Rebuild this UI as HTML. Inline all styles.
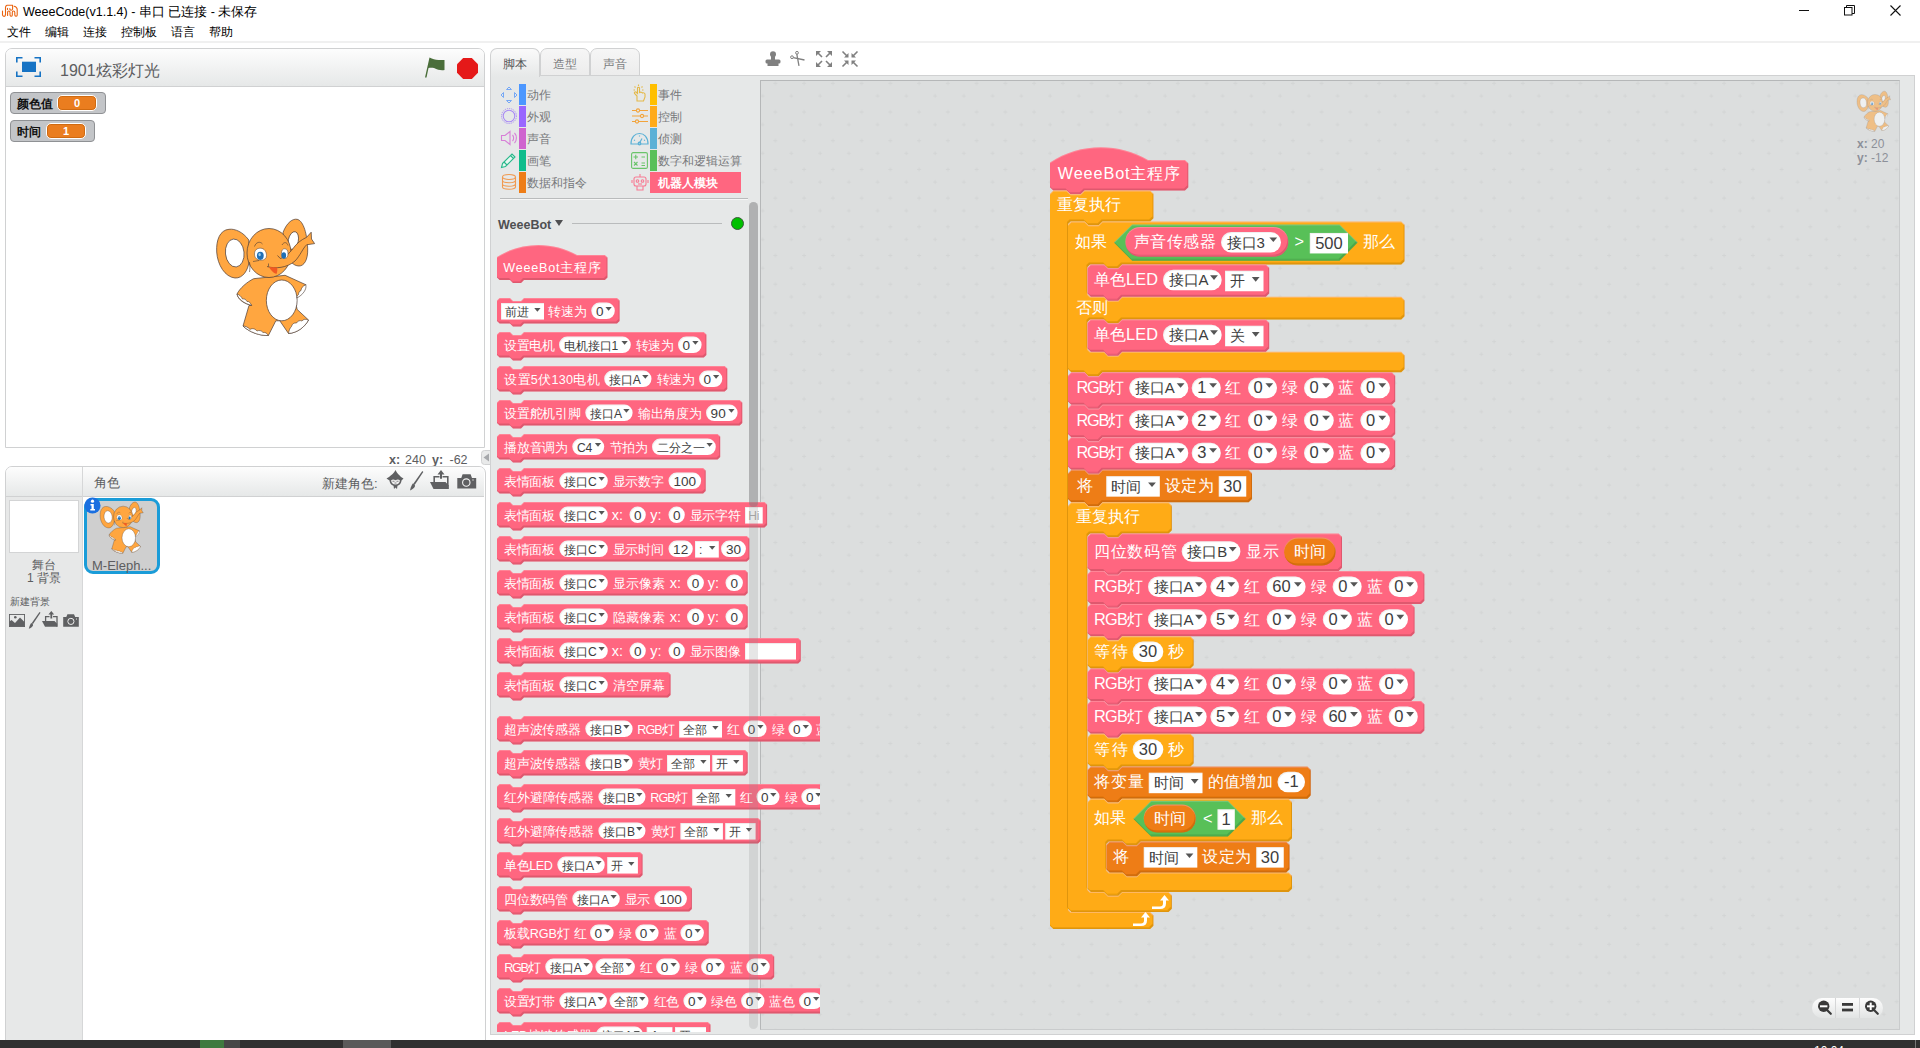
<!DOCTYPE html><html><head><meta charset="utf-8"><style>
*{margin:0;padding:0;box-sizing:border-box}
html,body{width:1920px;height:1048px;overflow:hidden;background:#fff;font-family:"Liberation Sans", sans-serif;}
.a{position:absolute}
.t{position:absolute;white-space:nowrap;line-height:1}
svg text{font-family:"Liberation Sans", sans-serif;}

</style></head><body>
<svg width="0" height="0" style="position:absolute"><defs>
<filter id="bev" x="-5%" y="-10%" width="110%" height="120%"><feOffset in="SourceAlpha" dx="-1" dy="-1.6" result="o"/><feComposite in="SourceAlpha" in2="o" operator="out" result="e"/><feFlood flood-color="#000" flood-opacity="0.26"/><feComposite in2="e" operator="in" result="s"/><feOffset in="SourceAlpha" dx="0" dy="1" result="o2"/><feComposite in="SourceAlpha" in2="o2" operator="out" result="e2"/><feFlood flood-color="#fff" flood-opacity="0.12"/><feComposite in2="e2" operator="in" result="h"/><feMerge><feMergeNode in="SourceGraphic"/><feMergeNode in="s"/><feMergeNode in="h"/></feMerge></filter>
<filter id="ins" x="-5%" y="-10%" width="110%" height="120%"><feOffset in="SourceAlpha" dx="0.8" dy="1" result="o"/><feComposite in="SourceAlpha" in2="o" operator="out" result="e"/><feFlood flood-color="#000" flood-opacity="0.13"/><feComposite in2="e" operator="in" result="s"/><feMerge><feMergeNode in="SourceGraphic"/><feMergeNode in="s"/></feMerge></filter>
<linearGradient id="hdr" x1="0" y1="0" x2="0" y2="1"><stop offset="0" stop-color="#fdfdfd"/><stop offset="1" stop-color="#e4e6e6"/></linearGradient>
</defs></svg>
<svg style="position:absolute;left:0px;top:0px;overflow:visible" width="20" height="19" viewBox="0 0 20 19"><path d="M2.5,11 V15 Q3.5,17 5,16 Q5.8,15 5.5,12 V7.2 Q5.5,6 7,5.3 H12.6 V9 Q12.4,10.4 11,10.3 Q9.6,10 9.8,8.5 M7.6,15.5 V12.3 Q7.6,11 8.7,11 Q10,11 10,12.5 V15 Q10.4,16.4 11.3,16.3 Q12.3,16 12.3,15 V12.5 Q12.3,11 13.5,11 Q14.8,11 14.8,12.5 V15 Q15.2,16.4 16.2,16.3 Q17.2,16 17.2,15 V9.5 Q17.2,7 14.2,6.2 M7.5,8.3 V9.5" fill="none" stroke="#ea6410" stroke-width="1.1" stroke-linecap="round" stroke-linejoin="round"/></svg>
<div class="t" style="left:23px;top:6px;font-size:12.5px;color:#000">WeeeCode(v1.1.4) - 串口 已连接 - 未保存</div>
<div class="a" style="left:1799px;top:10px;width:10px;height:1px;background:#111"></div>
<svg style="position:absolute;left:1844px;top:5px;overflow:visible" width="11" height="11" viewBox="0 0 11 11"><rect x="0.5" y="2.5" width="7.5" height="7.5" fill="none" stroke="#111" stroke-width="1"/><path d="M2.5,2.5 V0.5 H10.5 V8.5 H8" fill="none" stroke="#111" stroke-width="1"/></svg>
<svg style="position:absolute;left:1890px;top:5px;overflow:visible" width="11" height="11" viewBox="0 0 11 11"><path d="M0.5,0.5 L10.5,10.5 M10.5,0.5 L0.5,10.5" stroke="#111" stroke-width="1.1"/></svg>
<div class="t" style="left:7px;top:26px;font-size:12px;color:#000">文件</div>
<div class="t" style="left:45px;top:26px;font-size:12px;color:#000">编辑</div>
<div class="t" style="left:83px;top:26px;font-size:12px;color:#000">连接</div>
<div class="t" style="left:121px;top:26px;font-size:12px;color:#000">控制板</div>
<div class="t" style="left:171px;top:26px;font-size:12px;color:#000">语言</div>
<div class="t" style="left:209px;top:26px;font-size:12px;color:#000">帮助</div>
<div class="a" style="left:0;top:41px;width:1920px;height:2px;background:#f0f0f0"></div>
<div class="a" style="left:5px;top:48px;width:480px;height:400px;border:1px solid #d0d1d2;border-radius:7px 7px 0 0;background:#fff;overflow:hidden">
<div class="a" style="left:0;top:0;width:478px;height:38px;background:linear-gradient(#fdfdfd,#e6e8e8);border-bottom:1px solid #d0d1d2"></div></div>
<svg style="position:absolute;left:16px;top:57px;overflow:visible" width="25" height="20" viewBox="0 0 25 20"><path d="M0.8,5.5 V0.8 H6.5 M18.5,0.8 H24.2 V5.5 M0.8,14.5 V19.2 H6.5 M18.5,19.2 H24.2 V14.5" fill="none" stroke="#1673c4" stroke-width="1.6"/><rect x="6" y="4.7" width="14" height="10.3" fill="#1673c4"/></svg>
<div class="t" style="left:60px;top:62.5px;font-size:16px;color:#5c5d5f">1901炫彩灯光</div>
<svg style="position:absolute;left:424px;top:56px;overflow:visible" width="22" height="23" viewBox="0 0 22 23"><path d="M1,21.5 L5.5,1.5 C9,3 12,4.5 16,4 L20.5,4 L20.5,14 C17,14.5 14,14 10,12 C8,11.5 6,11.5 4.5,12 L2.5,21.5 Z" fill="#4a6e3a"/></svg>
<svg style="position:absolute;left:457px;top:58px;overflow:visible" width="21" height="21" viewBox="0 0 21 21"><path d="M6.2,0 H14.8 L21,6.2 V14.8 L14.8,21 H6.2 L0,14.8 V6.2 Z" fill="#e51919"/></svg>
<div class="a" style="left:10px;top:92px;width:96px;height:22px;background:#c3c5c8;border:1px solid #8f9194;border-radius:4px"></div>
<div class="t" style="left:17px;top:98px;font-size:12px;font-weight:bold;color:#111">颜色值</div>
<div class="a" style="left:57px;top:95px;width:40px;height:16px;background:#ea7d1f;border:1px solid #fff;border-radius:5px;box-shadow:inset 0 0 0 1px #d06a10"></div>
<div class="t" style="left:57px;top:98px;width:40px;text-align:center;font-size:11px;font-weight:bold;color:#fff">0</div>
<div class="a" style="left:10px;top:120px;width:85px;height:22px;background:#c3c5c8;border:1px solid #8f9194;border-radius:4px"></div>
<div class="t" style="left:17px;top:126px;font-size:12px;font-weight:bold;color:#111">时间</div>
<div class="a" style="left:46px;top:123px;width:40px;height:16px;background:#ea7d1f;border:1px solid #fff;border-radius:5px;box-shadow:inset 0 0 0 1px #d06a10"></div>
<div class="t" style="left:46px;top:126px;width:40px;text-align:center;font-size:11px;font-weight:bold;color:#fff">1</div>
<svg class="a" style="left:205px;top:210px" width="120" height="135" viewBox="0 0 120 135">
<g stroke="#4a3a34" stroke-width="0.7" stroke-linejoin="round">
<path d="M78,22.5 C82,12 88,8.5 92,9.3 C97,10 102,20 102.7,39 C103,50 99,56 94,56 C88,56 84,50 82,45 Z" fill="#FFA640"/>
<ellipse cx="88.3" cy="30.5" rx="5" ry="9" transform="rotate(12 88.3 30.5)" fill="#fff"/>
<path d="M48.7,68.7 C42,72 35,78 32,84 C33,90 40,94 46.7,95.4 L44,95.4 L38,116 C44,122 55,126 63.4,125.5 L70.8,110.8 L74.8,110.8 L83.5,123.5 C92,123 100,117 103.5,110 L92.1,99.4 C91,95 91,91 90.8,88 C95,84 99,79 100.8,74.7 L80.1,65.3 Z" fill="#FFA640"/>
<ellipse cx="76.75" cy="90.4" rx="15.4" ry="20.4" fill="#fff"/>
<path d="M43.8,30 C38,22 30,18.5 24,19.3 C15,20 11,30 11.7,42 C12.5,55 20,67 30,68 C38,68.5 43,60 44,52 Z" fill="#FFA640"/>
<ellipse cx="29.75" cy="43" rx="9.3" ry="14" transform="rotate(-6 29.75 43)" fill="#fff"/>
<ellipse cx="64" cy="43" rx="22" ry="24.5" fill="#FFA640"/>
<path d="M62,56.5 C70,59 82,58 90,51 C95,46 98,38 101.6,34.8 L109.6,33.6 L106.5,29 L106.2,22.2 L101.6,27.3 C96,30 92,33 88,38.5 C84,44 80,47 75.3,48.5 L72,45 L64,50 Z" fill="#FFA640" stroke="none"/><path d="M62,56.5 C70,59 82,58 90,51 C95,46 98,38 101.6,34.8 L109.6,33.6 L106.5,29 L106.2,22.2 L101.6,27.3 C96,30 92,33 88,38.5 C84,44 80,47 75.3,48.5 L72.5,45.5" fill="none"/>
<path d="M63.8,57 C66,60 68,63 71.5,64 C72.5,62 72.5,59 72,57.5 Z" fill="#f15a22" stroke="none"/>
</g>
<path d="M49.5,44 C49.5,40 52,38.2 55.5,38.2 C59.5,38.2 61.5,42 61.5,45.5 C61.5,48.5 59.5,50.2 56,50.2 C52,50.2 49.5,48 49.5,44 Z" fill="#fff" stroke="#4a3a34" stroke-width="0.5"/>
<ellipse cx="55.3" cy="45.8" rx="3.4" ry="4.1" fill="#1f6fb5"/>
<ellipse cx="54.6" cy="44.6" rx="1.2" ry="1.6" fill="#9fd0f0"/>
<ellipse cx="79.7" cy="43.6" rx="3.3" ry="4.8" fill="#fff" stroke="#4a3a34" stroke-width="0.5"/>
<ellipse cx="78.8" cy="45.5" rx="2.3" ry="3.2" fill="#1f6fb5"/>
<path d="M49.5,36.5 C51,32 55,31 57.5,34 M77,35 C79,31.5 82,32 83,35.5 M54,50.5 L48,51.5 M44.5,52 C45,56 45,59 44.5,62 M63.5,53.5 V56.5" fill="none" stroke="#4a3a34" stroke-width="0.6"/>
<g fill="#fff" stroke="#4a3a34" stroke-width="0.6">
<path d="M32,84 C33,89 39,93.5 46.7,95.4 C45,92.5 44,91 42,91.5 C41,89.5 39.5,88.5 37.5,89 C36.5,86.5 34,84.5 32,84 Z"/>
<path d="M100.8,74.7 C102,79 98,85 91.8,88 C92,86 92.5,85 93.5,84.5 C93.5,82.5 94.5,81 96,80.5 C96,78.5 97.5,76 100.8,74.7 Z"/>
<path d="M38,116 C44,122 55,126 63.4,125.5 C62,123 60,122 58,122.5 C56.5,120.5 54,120 52,121 C50,118.5 47,118 45,119.5 C43,117 40,116 38,116 Z"/>
<path d="M83.5,123.5 C92,123 100,117 103.5,110 C100,108.5 98,109.5 97,111 C95,110 92.5,111 91.5,113 C89,112.5 87,114 86.5,116.5 C85,118 84,120 83.5,123.5 Z"/>
</g>
</svg>
<div class="t" style="left:389px;top:454px;font-size:12.5px;color:#5c5d5f;font-weight:bold">x:</div>
<div class="t" style="left:405px;top:454px;font-size:12.5px;color:#5c5d5f;">240</div>
<div class="t" style="left:432px;top:454px;font-size:12.5px;color:#5c5d5f;font-weight:bold">y:</div>
<div class="t" style="left:449.5px;top:454px;font-size:12.5px;color:#5c5d5f;">-62</div>
<svg style="position:absolute;left:481px;top:450px;overflow:visible" width="10" height="15" viewBox="0 0 10 15"><rect x="0.5" y="0.5" width="12" height="14" rx="3" fill="#e9eaea" stroke="#d0d1d2"/><path d="M2.5,7.5 L8,3.5 V11.5 Z" fill="#a6a8ab"/></svg>
<div class="a" style="left:5px;top:466px;width:481px;height:600px;border:1px solid #d0d1d2;border-radius:7px 7px 0 0;background:#fff;overflow:hidden">
<div class="a" style="left:0;top:0;width:478px;height:30px;background:linear-gradient(#fdfdfd,#e6e8e8);border-bottom:1px solid #d0d1d2"></div>
<div class="a" style="left:0;top:30px;width:77px;height:600px;background:#e7e8e8"></div>
<div class="a" style="left:76px;top:0;width:1px;height:600px;background:#d6d7d8"></div>
</div>
<div class="t" style="left:94px;top:476px;font-size:13px;color:#5c5d5f">角色</div>
<div class="t" style="left:322px;top:477px;font-size:13px;color:#5c5d5f">新建角色:</div>
<svg style="position:absolute;left:386px;top:470px;overflow:visible" width="18" height="20" viewBox="0 0 18 20"><path d="M9.5,0 C10.5,3 13.5,5 15,7 L17.5,8.5 L15.5,10.5 C15,14.5 12.5,16 9.5,16 C6.5,16 4,14.5 3.5,10.5 L0.5,8.5 L3,7 C5,5 8.5,3 9.5,0 Z" fill="#5f6062"/><path d="M5,10.5 C6.5,9 8,9.5 9.5,10.2 C11,9.5 12.5,9 14,10.5 C13.5,13 12,14.5 9.5,14.5 C7,14.5 5.5,13 5,10.5 Z" fill="#eee"/><path d="M6.5,11.3 H8.5 M10.5,11.3 H12.5 M8.5,13 H10.5" stroke="#5f6062" stroke-width="0.7"/><path d="M7.5,15.5 H11.5 L11,19 L9.5,17.5 L8,19 Z" fill="#5f6062"/></svg>
<svg style="position:absolute;left:409px;top:470px;overflow:visible" width="15" height="21" viewBox="0 0 15 21"><path d="M13.3,1 L14.3,1.9 L5.8,14.8 L4.2,13.9 Z" fill="#5f6062"/><path d="M3.8,13.6 C5.2,14 6.3,15 5.9,16.5 C5.2,18.3 3,19.6 1,20.5 C1.4,18.6 2,16.6 3,14.8 Z" fill="#5f6062"/></svg>
<svg style="position:absolute;left:430px;top:470px;overflow:visible" width="20" height="20" viewBox="0 0 20 20"><path d="M11,0 L14.5,4.5 H12 V8.8 H10 V4.5 H7.5 Z" fill="#5f6062"/><path d="M4.2,12.5 V6.8 H9.5 M12.5,6.8 H17.8 V19" fill="none" stroke="#5f6062" stroke-width="1.6"/><path d="M0,12 H15.5 L18.6,15.2 V19 H3.5 Z" fill="#5f6062"/></svg>
<svg style="position:absolute;left:457px;top:474px;overflow:visible" width="20" height="15" viewBox="0 0 20 15"><path d="M0.3,4 H4.3 L5.6,0.3 H13.6 L15,4 H19.2 V14.4 H0.3 Z" fill="#5f6062"/><circle cx="9.3" cy="8.6" r="3.7" fill="none" stroke="#f4f4f4" stroke-width="1.1"/><rect x="15.6" y="5.2" width="0.8" height="1.6" fill="#f4f4f4"/></svg>
<div class="a" style="left:9px;top:500px;width:70px;height:53px;background:#fff;border:1px solid #d3d4d5"></div>
<div class="t" style="left:32px;top:559px;font-size:12px;color:#5c5d5f">舞台</div>
<div class="t" style="left:27px;top:572px;font-size:12px;color:#5c5d5f">1 背景</div>
<div class="t" style="left:10px;top:597px;font-size:10px;color:#5c5d5f">新建背景</div>
<svg style="position:absolute;left:9px;top:614px;overflow:visible" width="16" height="13" viewBox="0 0 16 13"><rect x="0.45" y="0.45" width="15.1" height="12.1" fill="none" stroke="#5f6062" stroke-width="0.9"/><path d="M0.5,12.5 V7.5 L2.5,6 L6,9 L11,3.5 L15.5,8 V12.5 Z" fill="#5f6062"/><circle cx="6.3" cy="3.3" r="1.3" fill="#5f6062"/></svg>
<svg style="position:absolute;left:28px;top:611px;overflow:visible" width="13" height="18" viewBox="0 0 13 18"><path d="M11.5,1 L12.5,1.8 L5,13 L3.6,12.2 Z" fill="#5f6062"/><path d="M3.2,12 C4.4,12.4 5.3,13.3 5,14.5 C4.4,16 2.5,17 0.8,17.8 C1.2,16.2 1.7,14.5 2.5,13 Z" fill="#5f6062"/></svg>
<svg style="position:absolute;left:42px;top:611px;overflow:visible" width="16" height="16" viewBox="0 0 16 16"><path d="M9.3,0 L12.2,3.5 H10.2 V7.5 H8.4 V3.5 H6.4 Z" fill="#5f6062"/><path d="M3.6,10.5 V5.6 H7.5 M11,5.6 H15 V15.8" fill="none" stroke="#5f6062" stroke-width="1.3"/><path d="M0,10 H12.5 L15.2,12.8 V15.8 H3 Z" fill="#5f6062"/></svg>
<svg style="position:absolute;left:63px;top:614px;overflow:visible" width="16" height="13" viewBox="0 0 16 13"><path d="M0.2,3 H3.3 L4.4,0.3 H11 L12.2,3 H15.8 V12.8 H0.2 Z" fill="#5f6062"/><circle cx="7.9" cy="7.4" r="3.1" fill="none" stroke="#eee" stroke-width="1"/><rect x="13" y="4.4" width="0.7" height="1.3" fill="#eee"/></svg>
<div class="a" style="left:84px;top:498px;width:76px;height:76px;border:3px solid #1a9cd8;border-radius:9px;background:#cfcfcf"></div>
<svg class="a" style="left:95.3px;top:497.9px" width="52.8" height="59.4" viewBox="0 0 120 135">
<g stroke="#4a3a34" stroke-width="0.7" stroke-linejoin="round">
<path d="M78,22.5 C82,12 88,8.5 92,9.3 C97,10 102,20 102.7,39 C103,50 99,56 94,56 C88,56 84,50 82,45 Z" fill="#FFA640"/>
<ellipse cx="88.3" cy="30.5" rx="5" ry="9" transform="rotate(12 88.3 30.5)" fill="#fff"/>
<path d="M48.7,68.7 C42,72 35,78 32,84 C33,90 40,94 46.7,95.4 L44,95.4 L38,116 C44,122 55,126 63.4,125.5 L70.8,110.8 L74.8,110.8 L83.5,123.5 C92,123 100,117 103.5,110 L92.1,99.4 C91,95 91,91 90.8,88 C95,84 99,79 100.8,74.7 L80.1,65.3 Z" fill="#FFA640"/>
<ellipse cx="76.75" cy="90.4" rx="15.4" ry="20.4" fill="#fff"/>
<path d="M43.8,30 C38,22 30,18.5 24,19.3 C15,20 11,30 11.7,42 C12.5,55 20,67 30,68 C38,68.5 43,60 44,52 Z" fill="#FFA640"/>
<ellipse cx="29.75" cy="43" rx="9.3" ry="14" transform="rotate(-6 29.75 43)" fill="#fff"/>
<ellipse cx="64" cy="43" rx="22" ry="24.5" fill="#FFA640"/>
<path d="M62,56.5 C70,59 82,58 90,51 C95,46 98,38 101.6,34.8 L109.6,33.6 L106.5,29 L106.2,22.2 L101.6,27.3 C96,30 92,33 88,38.5 C84,44 80,47 75.3,48.5 L72,45 L64,50 Z" fill="#FFA640" stroke="none"/><path d="M62,56.5 C70,59 82,58 90,51 C95,46 98,38 101.6,34.8 L109.6,33.6 L106.5,29 L106.2,22.2 L101.6,27.3 C96,30 92,33 88,38.5 C84,44 80,47 75.3,48.5 L72.5,45.5" fill="none"/>
<path d="M63.8,57 C66,60 68,63 71.5,64 C72.5,62 72.5,59 72,57.5 Z" fill="#f15a22" stroke="none"/>
</g>
<path d="M49.5,44 C49.5,40 52,38.2 55.5,38.2 C59.5,38.2 61.5,42 61.5,45.5 C61.5,48.5 59.5,50.2 56,50.2 C52,50.2 49.5,48 49.5,44 Z" fill="#fff" stroke="#4a3a34" stroke-width="0.5"/>
<ellipse cx="55.3" cy="45.8" rx="3.4" ry="4.1" fill="#1f6fb5"/>
<ellipse cx="54.6" cy="44.6" rx="1.2" ry="1.6" fill="#9fd0f0"/>
<ellipse cx="79.7" cy="43.6" rx="3.3" ry="4.8" fill="#fff" stroke="#4a3a34" stroke-width="0.5"/>
<ellipse cx="78.8" cy="45.5" rx="2.3" ry="3.2" fill="#1f6fb5"/>
<path d="M49.5,36.5 C51,32 55,31 57.5,34 M77,35 C79,31.5 82,32 83,35.5 M54,50.5 L48,51.5 M44.5,52 C45,56 45,59 44.5,62 M63.5,53.5 V56.5" fill="none" stroke="#4a3a34" stroke-width="0.6"/>
<g fill="#fff" stroke="#4a3a34" stroke-width="0.6">
<path d="M32,84 C33,89 39,93.5 46.7,95.4 C45,92.5 44,91 42,91.5 C41,89.5 39.5,88.5 37.5,89 C36.5,86.5 34,84.5 32,84 Z"/>
<path d="M100.8,74.7 C102,79 98,85 91.8,88 C92,86 92.5,85 93.5,84.5 C93.5,82.5 94.5,81 96,80.5 C96,78.5 97.5,76 100.8,74.7 Z"/>
<path d="M38,116 C44,122 55,126 63.4,125.5 C62,123 60,122 58,122.5 C56.5,120.5 54,120 52,121 C50,118.5 47,118 45,119.5 C43,117 40,116 38,116 Z"/>
<path d="M83.5,123.5 C92,123 100,117 103.5,110 C100,108.5 98,109.5 97,111 C95,110 92.5,111 91.5,113 C89,112.5 87,114 86.5,116.5 C85,118 84,120 83.5,123.5 Z"/>
</g>
</svg>
<div class="t" style="left:92px;top:559px;font-size:13px;color:#5c5d5f">M-Eleph...</div>
<svg style="position:absolute;left:84px;top:497px;overflow:visible" width="17" height="17" viewBox="0 0 17 17"><circle cx="8.5" cy="8.5" r="8" fill="#1a6fe0"/><circle cx="8.5" cy="4.2" r="1.6" fill="#fff"/><path d="M6.5,7 H9.8 V12 H11 V13.5 H6.3 V12 H7.5 V8.4 H6.5 Z" fill="#fff"/></svg>
<div class="a" style="left:490px;top:75px;width:1425px;height:960px;background:#e6e8e8;border:1px solid #d0d1d2"></div>
<div class="a" style="left:540px;top:48px;width:50px;height:28px;border:1px solid #d0d1d2;border-radius:7px 7px 0 0;background:linear-gradient(#f6f6f6,#ececec)"></div>
<div class="t" style="left:540px;top:57.5px;width:50px;text-align:center;font-size:12px;color:#7a7b7d">造型</div>
<div class="a" style="left:590px;top:48px;width:50px;height:28px;border:1px solid #d0d1d2;border-radius:7px 7px 0 0;background:linear-gradient(#f6f6f6,#ececec)"></div>
<div class="t" style="left:590px;top:57.5px;width:50px;text-align:center;font-size:12px;color:#7a7b7d">声音</div>
<div class="a" style="left:490px;top:48px;width:50px;height:29px;border:1px solid #d0d1d2;border-bottom:none;border-radius:7px 7px 0 0;background:linear-gradient(#fafafa,#e6e8e8)"></div>
<div class="t" style="left:490px;top:57.5px;width:50px;text-align:center;font-size:12px;color:#4f5052">脚本</div>
<svg style="position:absolute;left:765px;top:51px;overflow:visible" width="16" height="16" viewBox="0 0 16 16"><circle cx="8" cy="3.2" r="3" fill="#808080"/><rect x="6" y="4" width="4" height="6" fill="#808080"/><rect x="0.5" y="8.5" width="15" height="4" rx="1.5" fill="#808080"/><rect x="2.5" y="12" width="11" height="3" fill="#808080"/></svg>
<svg style="position:absolute;left:790px;top:51px;overflow:visible" width="16" height="16" viewBox="0 0 16 16"><circle cx="7" cy="1.8" r="1.4" fill="none" stroke="#808080" stroke-width="1"/><circle cx="2" cy="6.2" r="1.4" fill="none" stroke="#808080" stroke-width="1"/><path d="M6.8,3.2 L9,14.8 M3.3,6.6 L14.5,9" stroke="#808080" stroke-width="1.3"/></svg>
<svg style="position:absolute;left:816px;top:51px;overflow:visible" width="16" height="16" viewBox="0 0 16 16"><path d="M1,1 L6,6 M15,1 L10,6 M1,15 L6,10 M15,15 L10,10" stroke="#808080" stroke-width="1.6"/><path d="M0,0 H5 L0,5 Z M16,0 H11 L16,5 Z M0,16 H5 L0,11 Z M16,16 H11 L16,11 Z" fill="#808080"/></svg>
<svg style="position:absolute;left:842px;top:51px;overflow:visible" width="16" height="16" viewBox="0 0 16 16"><path d="M0.5,0.5 L5,5 M15.5,0.5 L11,5 M0.5,15.5 L5,11 M15.5,15.5 L11,11" stroke="#808080" stroke-width="1.6"/><path d="M6.5,6.5 H2 L6.5,2 Z M9.5,6.5 H14 L9.5,2 Z M6.5,9.5 H2 L6.5,14 Z M9.5,9.5 H14 L9.5,14 Z" fill="#808080"/></svg>
<div class="a" style="left:519px;top:84px;width:7px;height:21px;background:#4C97FF"></div>
<div class="t" style="left:527px;top:89px;font-size:12px;color:#77787b">动作</div>
<div class="a" style="left:519px;top:106px;width:7px;height:21px;background:#9966FF"></div>
<div class="t" style="left:527px;top:111px;font-size:12px;color:#77787b">外观</div>
<div class="a" style="left:519px;top:128px;width:7px;height:21px;background:#CF63CF"></div>
<div class="t" style="left:527px;top:133px;font-size:12px;color:#77787b">声音</div>
<div class="a" style="left:519px;top:150px;width:7px;height:21px;background:#0FBD8C"></div>
<div class="t" style="left:527px;top:155px;font-size:12px;color:#77787b">画笔</div>
<div class="a" style="left:519px;top:172px;width:7px;height:21px;background:#EE7D16"></div>
<div class="t" style="left:527px;top:177px;font-size:12px;color:#77787b">数据和指令</div>
<div class="a" style="left:650px;top:84px;width:7px;height:21px;background:#FFBF00"></div>
<div class="t" style="left:658px;top:89px;font-size:12px;color:#77787b">事件</div>
<div class="a" style="left:650px;top:106px;width:7px;height:21px;background:#FFAB19"></div>
<div class="t" style="left:658px;top:111px;font-size:12px;color:#77787b">控制</div>
<div class="a" style="left:650px;top:128px;width:7px;height:21px;background:#5CB1D6"></div>
<div class="t" style="left:658px;top:133px;font-size:12px;color:#77787b">侦测</div>
<div class="a" style="left:650px;top:150px;width:7px;height:21px;background:#59C059"></div>
<div class="t" style="left:658px;top:155px;font-size:12px;color:#77787b">数字和逻辑运算</div>
<div class="a" style="left:650px;top:172px;width:91px;height:21px;background:#FF6680"></div>
<div class="t" style="left:658px;top:177px;font-size:12px;font-weight:bold;color:#fff">机器人模块</div>
<svg style="position:absolute;left:500px;top:86px;overflow:visible" width="18" height="18" viewBox="0 0 18 18"><g fill="none" stroke="#76a8f5" stroke-width="1"><path d="M6.5,3.5 L9,1 L11.5,3.5 Z M6.5,14.5 L9,17 L11.5,14.5 Z M3.5,6.5 L1,9 L3.5,11.5 Z M14.5,6.5 L17,9 L14.5,11.5 Z"/></g></svg>
<svg style="position:absolute;left:500px;top:107px;overflow:visible" width="18" height="18" viewBox="0 0 18 18"><circle cx="9" cy="9" r="7.5" fill="none" stroke="#a98bf5" stroke-width="1" stroke-dasharray="1.2 1"/><circle cx="9" cy="9" r="5.8" fill="none" stroke="#a98bf5" stroke-width="1.1"/></svg>
<svg style="position:absolute;left:500px;top:129px;overflow:visible" width="18" height="18" viewBox="0 0 18 18"><path d="M1.5,6.5 H5 L10,2.5 V15.5 L5,11.5 H1.5 Z" fill="none" stroke="#d77fd7" stroke-width="1.1"/><path d="M12.5,6 C14,7.5 14,10.5 12.5,12 M14.5,4 C17,6.5 17,11.5 14.5,14" fill="none" stroke="#d77fd7" stroke-width="1.1"/></svg>
<svg style="position:absolute;left:500px;top:151px;overflow:visible" width="18" height="18" viewBox="0 0 18 18"><path d="M2.5,12.5 L12,3 L15,6 L5.5,15.5 L1.5,16.5 Z M10.5,4.5 L13.5,7.5 M4,11 L7,14" fill="#e8f7f1" stroke="#27b88a" stroke-width="1.1"/></svg>
<svg style="position:absolute;left:500px;top:173px;overflow:visible" width="18" height="18" viewBox="0 0 18 18"><g fill="none" stroke="#f09a50" stroke-width="1.1"><ellipse cx="9" cy="4" rx="6.5" ry="2.5"/><path d="M2.5,4 V14 C2.5,17 15.5,17 15.5,14 V4 M2.5,7.5 C2.5,10.5 15.5,10.5 15.5,7.5 M2.5,11 C2.5,14 15.5,14 15.5,11"/></g></svg>
<svg style="position:absolute;left:631px;top:84px;overflow:visible" width="18" height="18" viewBox="0 0 18 18"><g fill="none" stroke="#e4b94a" stroke-width="1.1"><path d="M6,17 V12 L3.5,9.5 C3,8.5 4,7.5 5,8 L6.5,9.5 V4 C6.5,3 8.5,3 8.5,4 V8.5 C9.5,8 11,8 11.5,9 C12.5,8.5 13.5,9 14,10 V13 L12.5,17 Z"/><path d="M7.5,0.5 V2 M3.5,2.5 L4.5,3.5 M11.5,2.5 L10.5,3.5 M2.5,6 H4 M11,6 H12.5"/></g></svg>
<svg style="position:absolute;left:631px;top:107px;overflow:visible" width="18" height="18" viewBox="0 0 18 18"><g fill="none" stroke="#f2a33a" stroke-width="1.1"><path d="M1,3.5 H17 M1,9 H17 M1,14.5 H17"/><circle cx="7" cy="3.5" r="1.6" fill="#e6e8e8"/><circle cx="11" cy="9" r="1.6" fill="#e6e8e8"/><circle cx="6" cy="14.5" r="1.6" fill="#e6e8e8"/></g></svg>
<svg style="position:absolute;left:630px;top:130px;overflow:visible" width="18" height="18" viewBox="0 0 18 18"><g fill="none" stroke="#5cb1d6" stroke-width="1.2"><path d="M1,14 C1,7 5,3.5 9.5,3.5 C14,3.5 18,7 18,14 Z"/><path d="M9.5,13 L12,8.5 M4,10 L5,10.5 M15,10 L14,10.5 M9.5,5.5 V6.5"/><circle cx="9.5" cy="13.5" r="1.3"/></g></svg>
<svg style="position:absolute;left:631px;top:152px;overflow:visible" width="18" height="18" viewBox="0 0 18 18"><rect x="0.6" y="0.6" width="15.8" height="15.8" rx="1.5" fill="none" stroke="#6ac46a" stroke-width="1.1"/><path d="M2.5,5 H7 M4.75,2.75 V7.25 M10.5,5 H14 M3,10 L6.5,13.5 M6.5,10 L3,13.5 M10.5,11 H14 M10.5,13.5 H14" stroke="#6ac46a" stroke-width="1.1"/></svg>
<svg style="position:absolute;left:631px;top:173px;overflow:visible" width="18" height="18" viewBox="0 0 18 18"><g fill="none" stroke="#f77b93" stroke-width="1.1"><rect x="3" y="4" width="12" height="9" rx="2"/><path d="M9,1 V4 M1,7 V10 M17,7 V10 M6,13 V17 H12 V13"/><circle cx="6.5" cy="8" r="1.3"/><circle cx="11.5" cy="8" r="1.3"/><path d="M7,11 H11"/></g></svg>
<div class="a" style="left:500px;top:198px;width:248px;height:1px;background:#b9bbbc"></div><div class="a" style="left:500px;top:199px;width:248px;height:1px;background:#f6f6f6"></div>
<div class="t" style="left:498px;top:219px;font-size:12.5px;font-weight:bold;color:#4f5052">WeeeBot</div>
<svg style="position:absolute;left:555px;top:220px;overflow:visible" width="8" height="6" viewBox="0 0 8 6"><path d="M0,0 H8 L4,6 Z" fill="#4f5052"/></svg>
<div class="a" style="left:572px;top:223px;width:150px;height:1px;background:#b9bbbc"></div>
<div class="a" style="left:730.5px;top:216.5px;width:13px;height:13px;border-radius:50%;background:#00c000;border:1px solid #3c5a3c"></div>
<svg class="a" style="left:760px;top:80px" width="1140" height="950"><defs><pattern id="gp" patternUnits="userSpaceOnUse" x="8.4" y="-4.1" width="28.75" height="28.7"><path d="M5,7.5 H9 M7,5.5 V9.5 M20.95,20 H24.95 M22.95,18 V22" stroke="#d3d5d5" stroke-width="1"/></pattern></defs><rect width="1140" height="950" fill="#dcdede"/><rect width="1140" height="950" fill="url(#gp)"/></svg>
<div class="a" style="left:760px;top:80px;width:1140px;height:950px;border-top:1px solid #b5b7b8;border-left:1px solid #b5b7b8;border-bottom:1px solid #c9cbcc;border-right:1px solid #c9cbcc"></div>
<svg class="a" style="left:1852.9px;top:87.9px;opacity:0.55" width="41.4" height="46.6" viewBox="0 0 120 135">
<g stroke="#4a3a34" stroke-width="0.7" stroke-linejoin="round">
<path d="M78,22.5 C82,12 88,8.5 92,9.3 C97,10 102,20 102.7,39 C103,50 99,56 94,56 C88,56 84,50 82,45 Z" fill="#FFA640"/>
<ellipse cx="88.3" cy="30.5" rx="5" ry="9" transform="rotate(12 88.3 30.5)" fill="#fff"/>
<path d="M48.7,68.7 C42,72 35,78 32,84 C33,90 40,94 46.7,95.4 L44,95.4 L38,116 C44,122 55,126 63.4,125.5 L70.8,110.8 L74.8,110.8 L83.5,123.5 C92,123 100,117 103.5,110 L92.1,99.4 C91,95 91,91 90.8,88 C95,84 99,79 100.8,74.7 L80.1,65.3 Z" fill="#FFA640"/>
<ellipse cx="76.75" cy="90.4" rx="15.4" ry="20.4" fill="#fff"/>
<path d="M43.8,30 C38,22 30,18.5 24,19.3 C15,20 11,30 11.7,42 C12.5,55 20,67 30,68 C38,68.5 43,60 44,52 Z" fill="#FFA640"/>
<ellipse cx="29.75" cy="43" rx="9.3" ry="14" transform="rotate(-6 29.75 43)" fill="#fff"/>
<ellipse cx="64" cy="43" rx="22" ry="24.5" fill="#FFA640"/>
<path d="M62,56.5 C70,59 82,58 90,51 C95,46 98,38 101.6,34.8 L109.6,33.6 L106.5,29 L106.2,22.2 L101.6,27.3 C96,30 92,33 88,38.5 C84,44 80,47 75.3,48.5 L72,45 L64,50 Z" fill="#FFA640" stroke="none"/><path d="M62,56.5 C70,59 82,58 90,51 C95,46 98,38 101.6,34.8 L109.6,33.6 L106.5,29 L106.2,22.2 L101.6,27.3 C96,30 92,33 88,38.5 C84,44 80,47 75.3,48.5 L72.5,45.5" fill="none"/>
<path d="M63.8,57 C66,60 68,63 71.5,64 C72.5,62 72.5,59 72,57.5 Z" fill="#f15a22" stroke="none"/>
</g>
<path d="M49.5,44 C49.5,40 52,38.2 55.5,38.2 C59.5,38.2 61.5,42 61.5,45.5 C61.5,48.5 59.5,50.2 56,50.2 C52,50.2 49.5,48 49.5,44 Z" fill="#fff" stroke="#4a3a34" stroke-width="0.5"/>
<ellipse cx="55.3" cy="45.8" rx="3.4" ry="4.1" fill="#1f6fb5"/>
<ellipse cx="54.6" cy="44.6" rx="1.2" ry="1.6" fill="#9fd0f0"/>
<ellipse cx="79.7" cy="43.6" rx="3.3" ry="4.8" fill="#fff" stroke="#4a3a34" stroke-width="0.5"/>
<ellipse cx="78.8" cy="45.5" rx="2.3" ry="3.2" fill="#1f6fb5"/>
<path d="M49.5,36.5 C51,32 55,31 57.5,34 M77,35 C79,31.5 82,32 83,35.5 M54,50.5 L48,51.5 M44.5,52 C45,56 45,59 44.5,62 M63.5,53.5 V56.5" fill="none" stroke="#4a3a34" stroke-width="0.6"/>
<g fill="#fff" stroke="#4a3a34" stroke-width="0.6">
<path d="M32,84 C33,89 39,93.5 46.7,95.4 C45,92.5 44,91 42,91.5 C41,89.5 39.5,88.5 37.5,89 C36.5,86.5 34,84.5 32,84 Z"/>
<path d="M100.8,74.7 C102,79 98,85 91.8,88 C92,86 92.5,85 93.5,84.5 C93.5,82.5 94.5,81 96,80.5 C96,78.5 97.5,76 100.8,74.7 Z"/>
<path d="M38,116 C44,122 55,126 63.4,125.5 C62,123 60,122 58,122.5 C56.5,120.5 54,120 52,121 C50,118.5 47,118 45,119.5 C43,117 40,116 38,116 Z"/>
<path d="M83.5,123.5 C92,123 100,117 103.5,110 C100,108.5 98,109.5 97,111 C95,110 92.5,111 91.5,113 C89,112.5 87,114 86.5,116.5 C85,118 84,120 83.5,123.5 Z"/>
</g>
</svg>
<div class="t" style="left:1857px;top:138px;font-size:12px;color:#8c9099;line-height:13.5px"><b>x:</b>&nbsp;20<br><b>y:</b>&nbsp;-12</div>
<div class="a" style="left:1812px;top:998px;width:71px;height:20px;border-radius:10px;background:linear-gradient(#fdfdfd,#e2e4e4)"></div>
<div class="a" style="left:1835px;top:998px;width:1px;height:20px;background:#d5d6d7"></div>
<div class="a" style="left:1859px;top:998px;width:1px;height:20px;background:#d5d6d7"></div>
<svg style="position:absolute;left:1817px;top:1000px;overflow:visible" width="16" height="16" viewBox="0 0 16 16"><circle cx="6.7" cy="6.3" r="5.7" fill="#3a3a3a"/><rect x="3" y="5.3" width="7.4" height="2" fill="#fff"/><path d="M10,10 L13.8,13.8" stroke="#3a3a3a" stroke-width="2.2" stroke-linecap="round"/></svg>
<svg style="position:absolute;left:1842px;top:1003px;overflow:visible" width="11" height="9" viewBox="0 0 11 9"><rect x="0" y="0" width="11" height="2.8" fill="#3a3a3a"/><rect x="0" y="5.6" width="11" height="2.8" fill="#3a3a3a"/></svg>
<svg style="position:absolute;left:1864px;top:1000px;overflow:visible" width="16" height="16" viewBox="0 0 16 16"><circle cx="6.7" cy="6.3" r="5.7" fill="#3a3a3a"/><rect x="3" y="5.3" width="7.4" height="2" fill="#fff"/><rect x="5.7" y="2.6" width="2" height="7.4" fill="#fff"/><path d="M10,10 L13.8,13.8" stroke="#3a3a3a" stroke-width="2.2" stroke-linecap="round"/></svg>
<svg class="a" style="left:0;top:0" width="1920" height="1048">
<g><path d="M1050,162.56 C1079.4,142.64 1118.6,142.64 1148,160 L1184.97,160 L1188.3,163.33 L1188.3,187.17 L1184.97,190.5 L1084.56,190.5 L1080.72,194.34 L1070.48,194.34 L1066.64,190.5 L1053.33,190.5 L1050,187.17 Z" fill="#FF6680" filter="url(#bev)"/><text x="1057.7" y="179.4" font-size="16.3" fill="#fff" textLength="122.5" lengthAdjust="spacing">WeeeBot主程序</text><path d="M1050,193.83 L1053.33,190.5 L1066.64,190.5 L1070.48,194.34 L1080.72,194.34 L1084.56,190.5 L1150.17,190.5 L1153.5,193.83 L1153.5,218.17 L1150.17,221.5 L1102.56,221.5 L1098.72,225.34 L1088.48,225.34 L1084.64,221.5 L1070.56,221.5 L1068,224.06 L1068,909.44 L1070.56,912 L1150.17,912 L1153.5,915.33 L1153.5,925.67 L1150.17,929 L1053.33,929 L1050,925.67 Z" fill="#FFAB19" filter="url(#bev)"/><text x="1056.7" y="210.4" font-size="16.3" fill="#fff">重复执行</text><path d="M1068,224.83 L1071.33,221.5 L1084.64,221.5 L1088.48,225.34 L1098.72,225.34 L1102.56,221.5 L1401.27,221.5 L1404.6,224.83 L1404.6,261.17 L1401.27,264.5 L1122.06,264.5 L1118.22,268.34 L1107.98,268.34 L1104.14,264.5 L1090.06,264.5 L1087.5,267.06 L1087.5,294.24 L1090.06,296.8 L1104.14,296.8 L1107.98,300.64 L1118.22,300.64 L1122.06,296.8 L1401.27,296.8 L1404.6,300.13 L1404.6,316.17 L1401.27,319.5 L1122.06,319.5 L1118.22,323.34 L1107.98,323.34 L1104.14,319.5 L1090.06,319.5 L1087.5,322.06 L1087.5,349.24 L1090.06,351.8 L1104.14,351.8 L1107.98,355.64 L1118.22,355.64 L1122.06,351.8 L1401.27,351.8 L1404.6,355.13 L1404.6,368.97 L1401.27,372.3 L1102.56,372.3 L1098.72,376.14 L1088.48,376.14 L1084.64,372.3 L1071.33,372.3 L1068,368.97 Z" fill="#FFAB19" filter="url(#bev)"/><text x="1075.4" y="247.4" font-size="16.3" fill="#fff">如果</text><text x="1363" y="247.4" font-size="16.3" fill="#fff">那么</text><text x="1075.8" y="312.8" font-size="16.3" fill="#fff">否则</text><path d="M1114,242.6 L1132.2,224.4 L1339.5,224.4 L1357.7,242.6 L1339.5,260.8 L1132.2,260.8 Z" fill="#59C059" filter="url(#bev)"/><rect x="1125.4" y="227" width="162.9" height="29.8" rx="14.9" fill="#FF6680" filter="url(#bev)"/><text x="1133.75" y="247.4" font-size="16.3" fill="#fff" textLength="82.25" lengthAdjust="spacing">声音传感器</text><rect x="1221" y="231.95" width="60" height="20.5" rx="10.25" fill="#fff" filter="url(#ins)"/><text x="1226.6" y="247.5" font-size="15" fill="#3d3d3d">接口3</text><path d="M1269.4,237.5 L1277.2,237.5 L1273.3,242.1 Z" fill="#555"/><text x="1294.6" y="247.4" font-size="16.3" fill="#fff">&gt;</text><rect x="1309.8" y="232.95" width="38.2" height="20.5" fill="#fff" filter="url(#ins)"/><text x="1328.9" y="248.5" font-size="16.5" fill="#3d3d3d" text-anchor="middle">500</text><path d="M1087.5,267.83 L1090.83,264.5 L1104.14,264.5 L1107.98,268.34 L1118.22,268.34 L1122.06,264.5 L1265.87,264.5 L1269.2,267.83 L1269.2,293.47 L1265.87,296.8 L1122.06,296.8 L1118.22,300.64 L1107.98,300.64 L1104.14,296.8 L1090.83,296.8 L1087.5,293.47 Z" fill="#FF6680" filter="url(#bev)"/><text x="1093.75" y="285.2" font-size="16.3" fill="#fff" textLength="64.25" lengthAdjust="spacing">单色LED</text><rect x="1163" y="269.75" width="58.7" height="20.5" rx="10.25" fill="#fff" filter="url(#ins)"/><text x="1168.6" y="285.3" font-size="15" fill="#3d3d3d">接口A</text><path d="M1210.1,275.3 L1217.9,275.3 L1214,279.9 Z" fill="#555"/><rect x="1225" y="270.75" width="38.5" height="20.5" fill="#fff" filter="url(#ins)"/><text x="1230" y="286.3" font-size="15" fill="#3d3d3d">开</text><path d="M1251.8,277.1 L1259.6,277.1 L1255.7,281.7 Z" fill="#555"/><path d="M1087.5,322.83 L1090.83,319.5 L1104.14,319.5 L1107.98,323.34 L1118.22,323.34 L1122.06,319.5 L1265.87,319.5 L1269.2,322.83 L1269.2,348.47 L1265.87,351.8 L1122.06,351.8 L1118.22,355.64 L1107.98,355.64 L1104.14,351.8 L1090.83,351.8 L1087.5,348.47 Z" fill="#FF6680" filter="url(#bev)"/><text x="1093.75" y="340.2" font-size="16.3" fill="#fff" textLength="64.25" lengthAdjust="spacing">单色LED</text><rect x="1163" y="324.75" width="58.7" height="20.5" rx="10.25" fill="#fff" filter="url(#ins)"/><text x="1168.6" y="340.3" font-size="15" fill="#3d3d3d">接口A</text><path d="M1210.1,330.3 L1217.9,330.3 L1214,334.9 Z" fill="#555"/><rect x="1225" y="325.75" width="38.5" height="20.5" fill="#fff" filter="url(#ins)"/><text x="1230" y="341.3" font-size="15" fill="#3d3d3d">关</text><path d="M1251.8,332.1 L1259.6,332.1 L1255.7,336.7 Z" fill="#555"/><path d="M1068,375.63 L1071.33,372.3 L1084.64,372.3 L1088.48,376.14 L1098.72,376.14 L1102.56,372.3 L1391.87,372.3 L1395.2,375.63 L1395.2,401.47 L1391.87,404.8 L1102.56,404.8 L1098.72,408.64 L1088.48,408.64 L1084.64,404.8 L1071.33,404.8 L1068,401.47 Z" fill="#FF6680" filter="url(#bev)"/><text x="1076.5" y="393.1" font-size="16.3" fill="#fff" textLength="47.7" lengthAdjust="spacing">RGB灯</text><rect x="1129.2" y="377.65" width="59.1" height="20.5" rx="10.25" fill="#fff" filter="url(#ins)"/><text x="1134.8" y="393.2" font-size="15" fill="#3d3d3d">接口A</text><path d="M1176.7,383.2 L1184.5,383.2 L1180.6,387.8 Z" fill="#555"/><rect x="1191.7" y="377.65" width="29.1" height="20.5" rx="10.25" fill="#fff" filter="url(#ins)"/><text x="1197.3" y="393.2" font-size="16.5" fill="#3d3d3d">1</text><path d="M1209.2,383.2 L1217,383.2 L1213.1,387.8 Z" fill="#555"/><text x="1225.4" y="393.1" font-size="16.3" fill="#fff" textLength="17.6" lengthAdjust="spacing">红</text><rect x="1248" y="377.65" width="29" height="20.5" rx="10.25" fill="#fff" filter="url(#ins)"/><text x="1253.6" y="393.2" font-size="16.5" fill="#3d3d3d">0</text><path d="M1265.4,383.2 L1273.2,383.2 L1269.3,387.8 Z" fill="#555"/><text x="1281.7" y="393.1" font-size="16.3" fill="#fff" textLength="17.3" lengthAdjust="spacing">绿</text><rect x="1304" y="377.65" width="29.75" height="20.5" rx="10.25" fill="#fff" filter="url(#ins)"/><text x="1309.6" y="393.2" font-size="16.5" fill="#3d3d3d">0</text><path d="M1322.15,383.2 L1329.95,383.2 L1326.05,387.8 Z" fill="#555"/><text x="1338" y="393.1" font-size="16.3" fill="#fff" textLength="17.4" lengthAdjust="spacing">蓝</text><rect x="1360.4" y="377.65" width="29.6" height="20.5" rx="10.25" fill="#fff" filter="url(#ins)"/><text x="1366" y="393.2" font-size="16.5" fill="#3d3d3d">0</text><path d="M1378.4,383.2 L1386.2,383.2 L1382.3,387.8 Z" fill="#555"/><path d="M1068,408.13 L1071.33,404.8 L1084.64,404.8 L1088.48,408.64 L1098.72,408.64 L1102.56,404.8 L1391.87,404.8 L1395.2,408.13 L1395.2,433.97 L1391.87,437.3 L1102.56,437.3 L1098.72,441.14 L1088.48,441.14 L1084.64,437.3 L1071.33,437.3 L1068,433.97 Z" fill="#FF6680" filter="url(#bev)"/><text x="1076.5" y="425.6" font-size="16.3" fill="#fff" textLength="47.7" lengthAdjust="spacing">RGB灯</text><rect x="1129.2" y="410.15" width="59.1" height="20.5" rx="10.25" fill="#fff" filter="url(#ins)"/><text x="1134.8" y="425.7" font-size="15" fill="#3d3d3d">接口A</text><path d="M1176.7,415.7 L1184.5,415.7 L1180.6,420.3 Z" fill="#555"/><rect x="1191.7" y="410.15" width="29.1" height="20.5" rx="10.25" fill="#fff" filter="url(#ins)"/><text x="1197.3" y="425.7" font-size="16.5" fill="#3d3d3d">2</text><path d="M1209.2,415.7 L1217,415.7 L1213.1,420.3 Z" fill="#555"/><text x="1225.4" y="425.6" font-size="16.3" fill="#fff" textLength="17.6" lengthAdjust="spacing">红</text><rect x="1248" y="410.15" width="29" height="20.5" rx="10.25" fill="#fff" filter="url(#ins)"/><text x="1253.6" y="425.7" font-size="16.5" fill="#3d3d3d">0</text><path d="M1265.4,415.7 L1273.2,415.7 L1269.3,420.3 Z" fill="#555"/><text x="1281.7" y="425.6" font-size="16.3" fill="#fff" textLength="17.3" lengthAdjust="spacing">绿</text><rect x="1304" y="410.15" width="29.75" height="20.5" rx="10.25" fill="#fff" filter="url(#ins)"/><text x="1309.6" y="425.7" font-size="16.5" fill="#3d3d3d">0</text><path d="M1322.15,415.7 L1329.95,415.7 L1326.05,420.3 Z" fill="#555"/><text x="1338" y="425.6" font-size="16.3" fill="#fff" textLength="17.4" lengthAdjust="spacing">蓝</text><rect x="1360.4" y="410.15" width="29.6" height="20.5" rx="10.25" fill="#fff" filter="url(#ins)"/><text x="1366" y="425.7" font-size="16.5" fill="#3d3d3d">0</text><path d="M1378.4,415.7 L1386.2,415.7 L1382.3,420.3 Z" fill="#555"/><path d="M1068,440.63 L1071.33,437.3 L1084.64,437.3 L1088.48,441.14 L1098.72,441.14 L1102.56,437.3 L1391.87,437.3 L1395.2,440.63 L1395.2,466.47 L1391.87,469.8 L1102.56,469.8 L1098.72,473.64 L1088.48,473.64 L1084.64,469.8 L1071.33,469.8 L1068,466.47 Z" fill="#FF6680" filter="url(#bev)"/><text x="1076.5" y="458.1" font-size="16.3" fill="#fff" textLength="47.7" lengthAdjust="spacing">RGB灯</text><rect x="1129.2" y="442.65" width="59.1" height="20.5" rx="10.25" fill="#fff" filter="url(#ins)"/><text x="1134.8" y="458.2" font-size="15" fill="#3d3d3d">接口A</text><path d="M1176.7,448.2 L1184.5,448.2 L1180.6,452.8 Z" fill="#555"/><rect x="1191.7" y="442.65" width="29.1" height="20.5" rx="10.25" fill="#fff" filter="url(#ins)"/><text x="1197.3" y="458.2" font-size="16.5" fill="#3d3d3d">3</text><path d="M1209.2,448.2 L1217,448.2 L1213.1,452.8 Z" fill="#555"/><text x="1225.4" y="458.1" font-size="16.3" fill="#fff" textLength="17.6" lengthAdjust="spacing">红</text><rect x="1248" y="442.65" width="29" height="20.5" rx="10.25" fill="#fff" filter="url(#ins)"/><text x="1253.6" y="458.2" font-size="16.5" fill="#3d3d3d">0</text><path d="M1265.4,448.2 L1273.2,448.2 L1269.3,452.8 Z" fill="#555"/><text x="1281.7" y="458.1" font-size="16.3" fill="#fff" textLength="17.3" lengthAdjust="spacing">绿</text><rect x="1304" y="442.65" width="29.75" height="20.5" rx="10.25" fill="#fff" filter="url(#ins)"/><text x="1309.6" y="458.2" font-size="16.5" fill="#3d3d3d">0</text><path d="M1322.15,448.2 L1329.95,448.2 L1326.05,452.8 Z" fill="#555"/><text x="1338" y="458.1" font-size="16.3" fill="#fff" textLength="17.4" lengthAdjust="spacing">蓝</text><rect x="1360.4" y="442.65" width="29.6" height="20.5" rx="10.25" fill="#fff" filter="url(#ins)"/><text x="1366" y="458.2" font-size="16.5" fill="#3d3d3d">0</text><path d="M1378.4,448.2 L1386.2,448.2 L1382.3,452.8 Z" fill="#555"/><path d="M1068,473.13 L1071.33,469.8 L1084.64,469.8 L1088.48,473.64 L1098.72,473.64 L1102.56,469.8 L1248.67,469.8 L1252,473.13 L1252,498.97 L1248.67,502.3 L1102.56,502.3 L1098.72,506.14 L1088.48,506.14 L1084.64,502.3 L1071.33,502.3 L1068,498.97 Z" fill="#EE7D16" filter="url(#bev)"/><text x="1076.5" y="490.6" font-size="16.3" fill="#fff" textLength="24.75" lengthAdjust="spacing">将</text><rect x="1106.25" y="476.15" width="53.55" height="20.5" fill="#fff" filter="url(#ins)"/><text x="1111.25" y="491.7" font-size="15" fill="#3d3d3d">时间</text><path d="M1148.1,482.5 L1155.9,482.5 L1152,487.1 Z" fill="#555"/><text x="1164.6" y="490.6" font-size="16.3" fill="#fff" textLength="49.15" lengthAdjust="spacing">设定为</text><rect x="1218.75" y="476.15" width="27.5" height="20.5" fill="#fff" filter="url(#ins)"/><text x="1232.5" y="491.7" font-size="16.5" fill="#3d3d3d" text-anchor="middle">30</text><path d="M1068,505.63 L1071.33,502.3 L1084.64,502.3 L1088.48,506.14 L1098.72,506.14 L1102.56,502.3 L1168.57,502.3 L1171.9,505.63 L1171.9,530.17 L1168.57,533.5 L1122.06,533.5 L1118.22,537.34 L1107.98,537.34 L1104.14,533.5 L1090.06,533.5 L1087.5,536.06 L1087.5,889.44 L1090.06,892 L1104.14,892 L1107.98,895.84 L1118.22,895.84 L1122.06,892 L1168.57,892 L1171.9,895.33 L1171.9,908.67 L1168.57,912 L1071.33,912 L1068,908.67 Z" fill="#FFAB19" filter="url(#bev)"/><text x="1075.8" y="522.4" font-size="16.3" fill="#fff">重复执行</text><path d="M1087.5,536.83 L1090.83,533.5 L1104.14,533.5 L1107.98,537.34 L1118.22,537.34 L1122.06,533.5 L1338.67,533.5 L1342,536.83 L1342,567.67 L1338.67,571 L1122.06,571 L1118.22,574.84 L1107.98,574.84 L1104.14,571 L1090.83,571 L1087.5,567.67 Z" fill="#FF6680" filter="url(#bev)"/><text x="1094" y="556.8" font-size="16.3" fill="#fff" textLength="82.7" lengthAdjust="spacing">四位数码管</text><rect x="1181.7" y="541.35" width="58.7" height="20.5" rx="10.25" fill="#fff" filter="url(#ins)"/><text x="1187.3" y="556.9" font-size="15" fill="#3d3d3d">接口B</text><path d="M1228.8,546.9 L1236.6,546.9 L1232.7,551.5 Z" fill="#555"/><text x="1246" y="556.8" font-size="16.3" fill="#fff" textLength="33" lengthAdjust="spacing">显示</text><rect x="1284" y="537.6" width="51.8" height="28" rx="14" fill="#EE7D16" filter="url(#bev)"/><text x="1309.9" y="556.8" font-size="16.3" fill="#fff" text-anchor="middle">时间</text><path d="M1087.5,574.33 L1090.83,571 L1104.14,571 L1107.98,574.84 L1118.22,574.84 L1122.06,571 L1421.07,571 L1424.4,574.33 L1424.4,600.67 L1421.07,604 L1122.06,604 L1118.22,607.84 L1107.98,607.84 L1104.14,604 L1090.83,604 L1087.5,600.67 Z" fill="#FF6680" filter="url(#bev)"/><text x="1094" y="592.05" font-size="16.3" fill="#fff" textLength="49" lengthAdjust="spacing">RGB灯</text><rect x="1148" y="576.6" width="58.7" height="20.5" rx="10.25" fill="#fff" filter="url(#ins)"/><text x="1153.6" y="592.15" font-size="15" fill="#3d3d3d">接口A</text><path d="M1195.1,582.15 L1202.9,582.15 L1199,586.75 Z" fill="#555"/><rect x="1210.4" y="576.6" width="28.6" height="20.5" rx="10.25" fill="#fff" filter="url(#ins)"/><text x="1216" y="592.15" font-size="16.5" fill="#3d3d3d">4</text><path d="M1227.4,582.15 L1235.2,582.15 L1231.3,586.75 Z" fill="#555"/><text x="1244" y="592.05" font-size="16.3" fill="#fff" textLength="17.7" lengthAdjust="spacing">红</text><rect x="1266.7" y="576.6" width="38.9" height="20.5" rx="10.25" fill="#fff" filter="url(#ins)"/><text x="1272.3" y="592.15" font-size="16.5" fill="#3d3d3d">60</text><path d="M1294,582.15 L1301.8,582.15 L1297.9,586.75 Z" fill="#555"/><text x="1310.9" y="592.05" font-size="16.3" fill="#fff" textLength="16.7" lengthAdjust="spacing">绿</text><rect x="1332.6" y="576.6" width="29.1" height="20.5" rx="10.25" fill="#fff" filter="url(#ins)"/><text x="1338.2" y="592.15" font-size="16.5" fill="#3d3d3d">0</text><path d="M1350.1,582.15 L1357.9,582.15 L1354,586.75 Z" fill="#555"/><text x="1366.8" y="592.05" font-size="16.3" fill="#fff" textLength="16.9" lengthAdjust="spacing">蓝</text><rect x="1388.7" y="576.6" width="29.1" height="20.5" rx="10.25" fill="#fff" filter="url(#ins)"/><text x="1394.3" y="592.15" font-size="16.5" fill="#3d3d3d">0</text><path d="M1406.2,582.15 L1414,582.15 L1410.1,586.75 Z" fill="#555"/><path d="M1087.5,607.33 L1090.83,604 L1104.14,604 L1107.98,607.84 L1118.22,607.84 L1122.06,604 L1411.27,604 L1414.6,607.33 L1414.6,632.97 L1411.27,636.3 L1122.06,636.3 L1118.22,640.14 L1107.98,640.14 L1104.14,636.3 L1090.83,636.3 L1087.5,632.97 Z" fill="#FF6680" filter="url(#bev)"/><text x="1094" y="624.7" font-size="16.3" fill="#fff" textLength="49" lengthAdjust="spacing">RGB灯</text><rect x="1148" y="609.25" width="58.7" height="20.5" rx="10.25" fill="#fff" filter="url(#ins)"/><text x="1153.6" y="624.8" font-size="15" fill="#3d3d3d">接口A</text><path d="M1195.1,614.8 L1202.9,614.8 L1199,619.4 Z" fill="#555"/><rect x="1210.4" y="609.25" width="28.6" height="20.5" rx="10.25" fill="#fff" filter="url(#ins)"/><text x="1216" y="624.8" font-size="16.5" fill="#3d3d3d">5</text><path d="M1227.4,614.8 L1235.2,614.8 L1231.3,619.4 Z" fill="#555"/><text x="1244" y="624.7" font-size="16.3" fill="#fff" textLength="17.7" lengthAdjust="spacing">红</text><rect x="1266.7" y="609.25" width="29.1" height="20.5" rx="10.25" fill="#fff" filter="url(#ins)"/><text x="1272.3" y="624.8" font-size="16.5" fill="#3d3d3d">0</text><path d="M1284.2,614.8 L1292,614.8 L1288.1,619.4 Z" fill="#555"/><text x="1301.1" y="624.7" font-size="16.3" fill="#fff" textLength="16.7" lengthAdjust="spacing">绿</text><rect x="1322.8" y="609.25" width="29.1" height="20.5" rx="10.25" fill="#fff" filter="url(#ins)"/><text x="1328.4" y="624.8" font-size="16.5" fill="#3d3d3d">0</text><path d="M1340.3,614.8 L1348.1,614.8 L1344.2,619.4 Z" fill="#555"/><text x="1357" y="624.7" font-size="16.3" fill="#fff" textLength="16.9" lengthAdjust="spacing">蓝</text><rect x="1378.9" y="609.25" width="29.1" height="20.5" rx="10.25" fill="#fff" filter="url(#ins)"/><text x="1384.5" y="624.8" font-size="16.5" fill="#3d3d3d">0</text><path d="M1396.4,614.8 L1404.2,614.8 L1400.3,619.4 Z" fill="#555"/><path d="M1087.5,639.63 L1090.83,636.3 L1104.14,636.3 L1107.98,640.14 L1118.22,640.14 L1122.06,636.3 L1190.42,636.3 L1193.75,639.63 L1193.75,665.27 L1190.42,668.6 L1122.06,668.6 L1118.22,672.44 L1107.98,672.44 L1104.14,668.6 L1090.83,668.6 L1087.5,665.27 Z" fill="#FFAB19" filter="url(#bev)"/><text x="1093.75" y="657" font-size="16.3" fill="#fff" textLength="33.95" lengthAdjust="spacing">等待</text><rect x="1132.7" y="641.55" width="30.6" height="20.5" rx="10.25" fill="#fff" filter="url(#ins)"/><text x="1148" y="657.1" font-size="16.5" fill="#3d3d3d" text-anchor="middle">30</text><text x="1167.5" y="657" font-size="16.3" fill="#fff">秒</text><path d="M1087.5,671.93 L1090.83,668.6 L1104.14,668.6 L1107.98,672.44 L1118.22,672.44 L1122.06,668.6 L1411.27,668.6 L1414.6,671.93 L1414.6,697.67 L1411.27,701 L1122.06,701 L1118.22,704.84 L1107.98,704.84 L1104.14,701 L1090.83,701 L1087.5,697.67 Z" fill="#FF6680" filter="url(#bev)"/><text x="1094" y="689.35" font-size="16.3" fill="#fff" textLength="49" lengthAdjust="spacing">RGB灯</text><rect x="1148" y="673.9" width="58.7" height="20.5" rx="10.25" fill="#fff" filter="url(#ins)"/><text x="1153.6" y="689.45" font-size="15" fill="#3d3d3d">接口A</text><path d="M1195.1,679.45 L1202.9,679.45 L1199,684.05 Z" fill="#555"/><rect x="1210.4" y="673.9" width="28.6" height="20.5" rx="10.25" fill="#fff" filter="url(#ins)"/><text x="1216" y="689.45" font-size="16.5" fill="#3d3d3d">4</text><path d="M1227.4,679.45 L1235.2,679.45 L1231.3,684.05 Z" fill="#555"/><text x="1244" y="689.35" font-size="16.3" fill="#fff" textLength="17.7" lengthAdjust="spacing">红</text><rect x="1266.7" y="673.9" width="29.1" height="20.5" rx="10.25" fill="#fff" filter="url(#ins)"/><text x="1272.3" y="689.45" font-size="16.5" fill="#3d3d3d">0</text><path d="M1284.2,679.45 L1292,679.45 L1288.1,684.05 Z" fill="#555"/><text x="1301.1" y="689.35" font-size="16.3" fill="#fff" textLength="16.7" lengthAdjust="spacing">绿</text><rect x="1322.8" y="673.9" width="29.1" height="20.5" rx="10.25" fill="#fff" filter="url(#ins)"/><text x="1328.4" y="689.45" font-size="16.5" fill="#3d3d3d">0</text><path d="M1340.3,679.45 L1348.1,679.45 L1344.2,684.05 Z" fill="#555"/><text x="1357" y="689.35" font-size="16.3" fill="#fff" textLength="16.9" lengthAdjust="spacing">蓝</text><rect x="1378.9" y="673.9" width="29.1" height="20.5" rx="10.25" fill="#fff" filter="url(#ins)"/><text x="1384.5" y="689.45" font-size="16.5" fill="#3d3d3d">0</text><path d="M1396.4,679.45 L1404.2,679.45 L1400.3,684.05 Z" fill="#555"/><path d="M1087.5,704.33 L1090.83,701 L1104.14,701 L1107.98,704.84 L1118.22,704.84 L1122.06,701 L1421.07,701 L1424.4,704.33 L1424.4,730.47 L1421.07,733.8 L1122.06,733.8 L1118.22,737.64 L1107.98,737.64 L1104.14,733.8 L1090.83,733.8 L1087.5,730.47 Z" fill="#FF6680" filter="url(#bev)"/><text x="1094" y="721.95" font-size="16.3" fill="#fff" textLength="49" lengthAdjust="spacing">RGB灯</text><rect x="1148" y="706.5" width="58.7" height="20.5" rx="10.25" fill="#fff" filter="url(#ins)"/><text x="1153.6" y="722.05" font-size="15" fill="#3d3d3d">接口A</text><path d="M1195.1,712.05 L1202.9,712.05 L1199,716.65 Z" fill="#555"/><rect x="1210.4" y="706.5" width="28.6" height="20.5" rx="10.25" fill="#fff" filter="url(#ins)"/><text x="1216" y="722.05" font-size="16.5" fill="#3d3d3d">5</text><path d="M1227.4,712.05 L1235.2,712.05 L1231.3,716.65 Z" fill="#555"/><text x="1244" y="721.95" font-size="16.3" fill="#fff" textLength="17.7" lengthAdjust="spacing">红</text><rect x="1266.7" y="706.5" width="29.1" height="20.5" rx="10.25" fill="#fff" filter="url(#ins)"/><text x="1272.3" y="722.05" font-size="16.5" fill="#3d3d3d">0</text><path d="M1284.2,712.05 L1292,712.05 L1288.1,716.65 Z" fill="#555"/><text x="1301.1" y="721.95" font-size="16.3" fill="#fff" textLength="16.7" lengthAdjust="spacing">绿</text><rect x="1322.8" y="706.5" width="38.9" height="20.5" rx="10.25" fill="#fff" filter="url(#ins)"/><text x="1328.4" y="722.05" font-size="16.5" fill="#3d3d3d">60</text><path d="M1350.1,712.05 L1357.9,712.05 L1354,716.65 Z" fill="#555"/><text x="1366.8" y="721.95" font-size="16.3" fill="#fff" textLength="16.9" lengthAdjust="spacing">蓝</text><rect x="1388.7" y="706.5" width="29.1" height="20.5" rx="10.25" fill="#fff" filter="url(#ins)"/><text x="1394.3" y="722.05" font-size="16.5" fill="#3d3d3d">0</text><path d="M1406.2,712.05 L1414,712.05 L1410.1,716.65 Z" fill="#555"/><path d="M1087.5,737.13 L1090.83,733.8 L1104.14,733.8 L1107.98,737.64 L1118.22,737.64 L1122.06,733.8 L1190.42,733.8 L1193.75,737.13 L1193.75,763.17 L1190.42,766.5 L1122.06,766.5 L1118.22,770.34 L1107.98,770.34 L1104.14,766.5 L1090.83,766.5 L1087.5,763.17 Z" fill="#FFAB19" filter="url(#bev)"/><text x="1093.75" y="754.7" font-size="16.3" fill="#fff" textLength="33.95" lengthAdjust="spacing">等待</text><rect x="1132.7" y="739.25" width="30.6" height="20.5" rx="10.25" fill="#fff" filter="url(#ins)"/><text x="1148" y="754.8" font-size="16.5" fill="#3d3d3d" text-anchor="middle">30</text><text x="1167.5" y="754.7" font-size="16.3" fill="#fff">秒</text><path d="M1087.5,769.83 L1090.83,766.5 L1104.14,766.5 L1107.98,770.34 L1118.22,770.34 L1122.06,766.5 L1307.47,766.5 L1310.8,769.83 L1310.8,795.37 L1307.47,798.7 L1122.06,798.7 L1118.22,802.54 L1107.98,802.54 L1104.14,798.7 L1090.83,798.7 L1087.5,795.37 Z" fill="#EE7D16" filter="url(#bev)"/><text x="1093.75" y="787.15" font-size="16.3" fill="#fff" textLength="50" lengthAdjust="spacing">将变量</text><rect x="1148.75" y="772.7" width="53.75" height="20.5" fill="#fff" filter="url(#ins)"/><text x="1153.75" y="788.25" font-size="15" fill="#3d3d3d">时间</text><path d="M1190.8,779.05 L1198.6,779.05 L1194.7,783.65 Z" fill="#555"/><text x="1207.7" y="787.15" font-size="16.3" fill="#fff" textLength="64.8" lengthAdjust="spacing">的值增加</text><rect x="1277.5" y="771.7" width="27.5" height="20.5" rx="10.25" fill="#fff" filter="url(#ins)"/><text x="1291.25" y="787.25" font-size="16.5" fill="#3d3d3d" text-anchor="middle">-1</text><path d="M1087.5,802.03 L1090.83,798.7 L1104.14,798.7 L1107.98,802.54 L1118.22,802.54 L1122.06,798.7 L1288.67,798.7 L1292,802.03 L1292,838.17 L1288.67,841.5 L1140.81,841.5 L1136.97,845.34 L1126.73,845.34 L1122.89,841.5 L1108.81,841.5 L1106.25,844.06 L1106.25,869.94 L1108.81,872.5 L1122.89,872.5 L1126.73,876.34 L1136.97,876.34 L1140.81,872.5 L1288.67,872.5 L1292,875.83 L1292,888.67 L1288.67,892 L1122.06,892 L1118.22,895.84 L1107.98,895.84 L1104.14,892 L1090.83,892 L1087.5,888.67 Z" fill="#FFAB19" filter="url(#bev)"/><text x="1093.75" y="822.5" font-size="16.3" fill="#fff">如果</text><text x="1250.8" y="822.5" font-size="16.3" fill="#fff">那么</text><path d="M1133.3,818.7 L1151.2,800.8 L1227.9,800.8 L1245.8,818.7 L1227.9,836.6 L1151.2,836.6 Z" fill="#59C059" filter="url(#bev)"/><rect x="1143.75" y="804.5" width="52.05" height="28" rx="14" fill="#EE7D16" filter="url(#bev)"/><text x="1169.78" y="823.7" font-size="16.3" fill="#fff" text-anchor="middle">时间</text><text x="1203" y="823.7" font-size="16.3" fill="#fff">&lt;</text><rect x="1217.5" y="809.25" width="17.3" height="20.5" fill="#fff" filter="url(#ins)"/><text x="1226.15" y="824.8" font-size="16.5" fill="#3d3d3d" text-anchor="middle">1</text><path d="M1106.25,844.83 L1109.58,841.5 L1122.89,841.5 L1126.73,845.34 L1136.97,845.34 L1140.81,841.5 L1286.27,841.5 L1289.6,844.83 L1289.6,869.17 L1286.27,872.5 L1140.81,872.5 L1136.97,876.34 L1126.73,876.34 L1122.89,872.5 L1109.58,872.5 L1106.25,869.17 Z" fill="#EE7D16" filter="url(#bev)"/><text x="1113" y="861.55" font-size="16.3" fill="#fff" textLength="25.75" lengthAdjust="spacing">将</text><rect x="1143.75" y="847.1" width="53.55" height="20.5" fill="#fff" filter="url(#ins)"/><text x="1148.75" y="862.65" font-size="15" fill="#3d3d3d">时间</text><path d="M1185.6,853.45 L1193.4,853.45 L1189.5,858.05 Z" fill="#555"/><text x="1202" y="861.55" font-size="16.3" fill="#fff" textLength="49.25" lengthAdjust="spacing">设定为</text><rect x="1256.25" y="847.1" width="27.5" height="20.5" fill="#fff" filter="url(#ins)"/><text x="1270" y="862.65" font-size="16.5" fill="#3d3d3d" text-anchor="middle">30</text><path d="M1152,906.5 L1160,906.5 Q1163,906.5 1163,903.5 L1163,900.5 L1160,900.5 L1164.5,895 L1169,900.5 L1166,900.5 L1166,903.5 Q1166,909 1160,909 L1152,909 Z" fill="#fff"/><path d="M1133,923.5 L1141,923.5 Q1144,923.5 1144,920.5 L1144,917.5 L1141,917.5 L1145.5,912 L1150,917.5 L1147,917.5 L1147,920.5 Q1147,926 1141,926 L1133,926 Z" fill="#fff"/></g>
</svg>
<svg class="a" style="left:490px;top:200px" width="330" height="832" viewBox="490 200 330 832">
<g><path d="M497,257 C521,241.33 553,241.33 577,255 L604.9,255 L607.5,257.6 L607.5,277.4 L604.9,280 L524,280 L521,283 L513,283 L510,280 L499.6,280 L497,277.4 Z" fill="#FF6680" filter="url(#bev)"/><text x="503.3" y="271.5" font-size="12.6" fill="#fff" textLength="97.5" lengthAdjust="spacing">WeeeBot主程序</text><path d="M497,300.6 L499.6,298 L510,298 L513,301 L521,301 L524,298 L617,298 L619.6,300.6 L619.6,320.9 L617,323.5 L524,323.5 L521,326.5 L513,326.5 L510,323.5 L499.6,323.5 L497,320.9 Z" fill="#FF6680" filter="url(#bev)"/><rect x="501" y="303.05" width="43" height="16.5" fill="#fff" filter="url(#ins)"/><text x="505" y="316.1" font-size="12.1" fill="#3d3d3d">前进</text><path d="M534.25,308 L540.55,308 L537.4,311.8 Z" fill="#555"/><text x="548.4" y="315.8" font-size="12.6" fill="#fff" textLength="38.4" lengthAdjust="spacing">转速为</text><rect x="591.3" y="302.55" width="23.5" height="16.5" rx="8.25" fill="#fff" filter="url(#ins)"/><text x="595.9" y="315.6" font-size="13.55" fill="#3d3d3d">0</text><path d="M605.45,306.9 L611.75,306.9 L608.6,310.7 Z" fill="#555"/><path d="M497,334.6 L499.6,332 L510,332 L513,335 L521,335 L524,332 L703.8,332 L706.4,334.6 L706.4,354.9 L703.8,357.5 L524,357.5 L521,360.5 L513,360.5 L510,357.5 L499.6,357.5 L497,354.9 Z" fill="#FF6680" filter="url(#bev)"/><text x="504.2" y="349.8" font-size="12.6" fill="#fff" textLength="50.3" lengthAdjust="spacing">设置电机</text><rect x="559" y="336.55" width="71.8" height="16.5" rx="8.25" fill="#fff" filter="url(#ins)"/><text x="563.6" y="349.6" font-size="12.1" fill="#3d3d3d">电机接口1</text><path d="M621.45,340.9 L627.75,340.9 L624.6,344.7 Z" fill="#555"/><text x="635.6" y="349.8" font-size="12.6" fill="#fff" textLength="37.9" lengthAdjust="spacing">转速为</text><rect x="678" y="336.55" width="23.6" height="16.5" rx="8.25" fill="#fff" filter="url(#ins)"/><text x="682.6" y="349.6" font-size="13.55" fill="#3d3d3d">0</text><path d="M692.25,340.9 L698.55,340.9 L695.4,344.7 Z" fill="#555"/><path d="M497,368.6 L499.6,366 L510,366 L513,369 L521,369 L524,366 L724.7,366 L727.3,368.6 L727.3,388.9 L724.7,391.5 L524,391.5 L521,394.5 L513,394.5 L510,391.5 L499.6,391.5 L497,388.9 Z" fill="#FF6680" filter="url(#bev)"/><text x="504.2" y="383.8" font-size="12.6" fill="#fff" textLength="95.5" lengthAdjust="spacing">设置5伏130电机</text><rect x="604.2" y="370.55" width="47.3" height="16.5" rx="8.25" fill="#fff" filter="url(#ins)"/><text x="608.8" y="383.6" font-size="12.1" fill="#3d3d3d">接口A</text><path d="M642.15,374.9 L648.45,374.9 L645.3,378.7 Z" fill="#555"/><text x="656.5" y="383.8" font-size="12.6" fill="#fff" textLength="38" lengthAdjust="spacing">转速为</text><rect x="699" y="370.55" width="23.3" height="16.5" rx="8.25" fill="#fff" filter="url(#ins)"/><text x="703.6" y="383.6" font-size="13.55" fill="#3d3d3d">0</text><path d="M712.95,374.9 L719.25,374.9 L716.1,378.7 Z" fill="#555"/><path d="M497,402.6 L499.6,400 L510,400 L513,403 L521,403 L524,400 L739.7,400 L742.3,402.6 L742.3,422.9 L739.7,425.5 L524,425.5 L521,428.5 L513,428.5 L510,425.5 L499.6,425.5 L497,422.9 Z" fill="#FF6680" filter="url(#bev)"/><text x="504.2" y="417.8" font-size="12.6" fill="#fff" textLength="76.6" lengthAdjust="spacing">设置舵机引脚</text><rect x="585.3" y="404.55" width="47.3" height="16.5" rx="8.25" fill="#fff" filter="url(#ins)"/><text x="589.9" y="417.6" font-size="12.1" fill="#3d3d3d">接口A</text><path d="M623.25,408.9 L629.55,408.9 L626.4,412.7 Z" fill="#555"/><text x="637.9" y="417.8" font-size="12.6" fill="#fff" textLength="63.6" lengthAdjust="spacing">输出角度为</text><rect x="706" y="404.55" width="31.6" height="16.5" rx="8.25" fill="#fff" filter="url(#ins)"/><text x="710.6" y="417.6" font-size="13.55" fill="#3d3d3d">90</text><path d="M728.25,408.9 L734.55,408.9 L731.4,412.7 Z" fill="#555"/><path d="M497,436.6 L499.6,434 L510,434 L513,437 L521,437 L524,434 L717.6,434 L720.2,436.6 L720.2,456.9 L717.6,459.5 L524,459.5 L521,462.5 L513,462.5 L510,459.5 L499.6,459.5 L497,456.9 Z" fill="#FF6680" filter="url(#bev)"/><text x="504.2" y="451.8" font-size="12.6" fill="#fff" textLength="63.6" lengthAdjust="spacing">播放音调为</text><rect x="572.3" y="438.55" width="31.9" height="16.5" rx="8.25" fill="#fff" filter="url(#ins)"/><text x="576.9" y="451.6" font-size="12.1" fill="#3d3d3d">C4</text><path d="M594.85,442.9 L601.15,442.9 L598,446.7 Z" fill="#555"/><text x="609.5" y="451.8" font-size="12.6" fill="#fff" textLength="38" lengthAdjust="spacing">节拍为</text><rect x="652" y="438.55" width="63.8" height="16.5" rx="8.25" fill="#fff" filter="url(#ins)"/><text x="656.6" y="451.6" font-size="12.1" fill="#3d3d3d">二分之一</text><path d="M706.45,442.9 L712.75,442.9 L709.6,446.7 Z" fill="#555"/><path d="M497,470.6 L499.6,468 L510,468 L513,471 L521,471 L524,468 L703.1,468 L705.7,470.6 L705.7,490.9 L703.1,493.5 L524,493.5 L521,496.5 L513,496.5 L510,493.5 L499.6,493.5 L497,490.9 Z" fill="#FF6680" filter="url(#bev)"/><text x="504.2" y="485.8" font-size="12.6" fill="#fff" textLength="50.7" lengthAdjust="spacing">表情面板</text><rect x="559.4" y="472.55" width="48.4" height="16.5" rx="8.25" fill="#fff" filter="url(#ins)"/><text x="564" y="485.6" font-size="12.1" fill="#3d3d3d">接口C</text><path d="M598.45,476.9 L604.75,476.9 L601.6,480.7 Z" fill="#555"/><text x="612.5" y="485.8" font-size="12.6" fill="#fff" textLength="51.5" lengthAdjust="spacing">显示数字</text><rect x="668.5" y="472.55" width="32.6" height="16.5" rx="8.25" fill="#fff" filter="url(#ins)"/><text x="684.8" y="485.6" font-size="13.55" fill="#3d3d3d" text-anchor="middle">100</text><path d="M497,504.6 L499.6,502 L510,502 L513,505 L521,505 L524,502 L764.5,502 L767.1,504.6 L767.1,524.9 L764.5,527.5 L524,527.5 L521,530.5 L513,530.5 L510,527.5 L499.6,527.5 L497,524.9 Z" fill="#FF6680" filter="url(#bev)"/><text x="504.2" y="519.8" font-size="12.6" fill="#fff" textLength="50.7" lengthAdjust="spacing">表情面板</text><rect x="559.4" y="506.55" width="48.4" height="16.5" rx="8.25" fill="#fff" filter="url(#ins)"/><text x="564" y="519.6" font-size="12.1" fill="#3d3d3d">接口C</text><path d="M598.45,510.9 L604.75,510.9 L601.6,514.7 Z" fill="#555"/><text x="611.8" y="519.8" font-size="14.49" fill="#fff">x:</text><rect x="629.5" y="506.55" width="16.3" height="16.5" rx="8.25" fill="#fff" filter="url(#ins)"/><text x="637.65" y="519.6" font-size="13.55" fill="#3d3d3d" text-anchor="middle">0</text><text x="650.3" y="519.8" font-size="14.49" fill="#fff">y:</text><rect x="668.5" y="506.55" width="16.3" height="16.5" rx="8.25" fill="#fff" filter="url(#ins)"/><text x="676.65" y="519.6" font-size="13.55" fill="#3d3d3d" text-anchor="middle">0</text><text x="689.75" y="519.8" font-size="12.6" fill="#fff" textLength="50.75" lengthAdjust="spacing">显示字符</text><rect x="745" y="507.05" width="17.7" height="16.5" fill="#fff" filter="url(#ins)"/><text x="753.85" y="520.1" font-size="12.1" fill="#aaa" text-anchor="middle">Hi</text><path d="M497,538.6 L499.6,536 L510,536 L513,539 L521,539 L524,536 L746.8,536 L749.4,538.6 L749.4,558.9 L746.8,561.5 L524,561.5 L521,564.5 L513,564.5 L510,561.5 L499.6,561.5 L497,558.9 Z" fill="#FF6680" filter="url(#bev)"/><text x="504.2" y="553.8" font-size="12.6" fill="#fff" textLength="50.7" lengthAdjust="spacing">表情面板</text><rect x="559.4" y="540.55" width="48.4" height="16.5" rx="8.25" fill="#fff" filter="url(#ins)"/><text x="564" y="553.6" font-size="12.1" fill="#3d3d3d">接口C</text><path d="M598.45,544.9 L604.75,544.9 L601.6,548.7 Z" fill="#555"/><text x="612.5" y="553.8" font-size="12.6" fill="#fff" textLength="51.5" lengthAdjust="spacing">显示时间</text><rect x="668.5" y="540.55" width="24.3" height="16.5" rx="8.25" fill="#fff" filter="url(#ins)"/><text x="680.65" y="553.6" font-size="13.55" fill="#3d3d3d" text-anchor="middle">12</text><rect x="695" y="541.05" width="23.8" height="16.5" fill="#fff" filter="url(#ins)"/><text x="699" y="554.1" font-size="12.1" fill="#3d3d3d">:</text><path d="M709.05,546 L715.35,546 L712.2,549.8 Z" fill="#555"/><rect x="721" y="540.55" width="24.9" height="16.5" rx="8.25" fill="#fff" filter="url(#ins)"/><text x="733.45" y="553.6" font-size="13.55" fill="#3d3d3d" text-anchor="middle">30</text><path d="M497,572.6 L499.6,570 L510,570 L513,573 L521,573 L524,570 L745.1,570 L747.7,572.6 L747.7,592.9 L745.1,595.5 L524,595.5 L521,598.5 L513,598.5 L510,595.5 L499.6,595.5 L497,592.9 Z" fill="#FF6680" filter="url(#bev)"/><text x="504.2" y="587.8" font-size="12.6" fill="#fff" textLength="50.7" lengthAdjust="spacing">表情面板</text><rect x="559.4" y="574.55" width="48.4" height="16.5" rx="8.25" fill="#fff" filter="url(#ins)"/><text x="564" y="587.6" font-size="12.1" fill="#3d3d3d">接口C</text><path d="M598.45,578.9 L604.75,578.9 L601.6,582.7 Z" fill="#555"/><text x="612.5" y="587.8" font-size="12.6" fill="#fff" textLength="52.75" lengthAdjust="spacing">显示像素</text><text x="669.75" y="587.8" font-size="14.49" fill="#fff">x:</text><rect x="687" y="574.55" width="16.9" height="16.5" rx="8.25" fill="#fff" filter="url(#ins)"/><text x="695.45" y="587.6" font-size="13.55" fill="#3d3d3d" text-anchor="middle">0</text><text x="707.8" y="587.8" font-size="14.49" fill="#fff">y:</text><rect x="725.5" y="574.55" width="17.4" height="16.5" rx="8.25" fill="#fff" filter="url(#ins)"/><text x="734.2" y="587.6" font-size="13.55" fill="#3d3d3d" text-anchor="middle">0</text><path d="M497,606.6 L499.6,604 L510,604 L513,607 L521,607 L524,604 L745.1,604 L747.7,606.6 L747.7,626.9 L745.1,629.5 L524,629.5 L521,632.5 L513,632.5 L510,629.5 L499.6,629.5 L497,626.9 Z" fill="#FF6680" filter="url(#bev)"/><text x="504.2" y="621.8" font-size="12.6" fill="#fff" textLength="50.7" lengthAdjust="spacing">表情面板</text><rect x="559.4" y="608.55" width="48.4" height="16.5" rx="8.25" fill="#fff" filter="url(#ins)"/><text x="564" y="621.6" font-size="12.1" fill="#3d3d3d">接口C</text><path d="M598.45,612.9 L604.75,612.9 L601.6,616.7 Z" fill="#555"/><text x="612.5" y="621.8" font-size="12.6" fill="#fff" textLength="52.75" lengthAdjust="spacing">隐藏像素</text><text x="669.75" y="621.8" font-size="14.49" fill="#fff">x:</text><rect x="687" y="608.55" width="16.9" height="16.5" rx="8.25" fill="#fff" filter="url(#ins)"/><text x="695.45" y="621.6" font-size="13.55" fill="#3d3d3d" text-anchor="middle">0</text><text x="707.8" y="621.8" font-size="14.49" fill="#fff">y:</text><rect x="725.5" y="608.55" width="17.4" height="16.5" rx="8.25" fill="#fff" filter="url(#ins)"/><text x="734.2" y="621.6" font-size="13.55" fill="#3d3d3d" text-anchor="middle">0</text><path d="M497,640.6 L499.6,638 L510,638 L513,641 L521,641 L524,638 L798.2,638 L800.8,640.6 L800.8,660.9 L798.2,663.5 L524,663.5 L521,666.5 L513,666.5 L510,663.5 L499.6,663.5 L497,660.9 Z" fill="#FF6680" filter="url(#bev)"/><text x="504.2" y="655.8" font-size="12.6" fill="#fff" textLength="50.7" lengthAdjust="spacing">表情面板</text><rect x="559.4" y="642.55" width="48.4" height="16.5" rx="8.25" fill="#fff" filter="url(#ins)"/><text x="564" y="655.6" font-size="12.1" fill="#3d3d3d">接口C</text><path d="M598.45,646.9 L604.75,646.9 L601.6,650.7 Z" fill="#555"/><text x="611.8" y="655.8" font-size="14.49" fill="#fff">x:</text><rect x="629.5" y="642.55" width="16.3" height="16.5" rx="8.25" fill="#fff" filter="url(#ins)"/><text x="637.65" y="655.6" font-size="13.55" fill="#3d3d3d" text-anchor="middle">0</text><text x="650.3" y="655.8" font-size="14.49" fill="#fff">y:</text><rect x="668.5" y="642.55" width="16.3" height="16.5" rx="8.25" fill="#fff" filter="url(#ins)"/><text x="676.65" y="655.6" font-size="13.55" fill="#3d3d3d" text-anchor="middle">0</text><text x="689.75" y="655.8" font-size="12.6" fill="#fff" textLength="50.75" lengthAdjust="spacing">显示图像</text><rect x="745" y="643.05" width="51" height="16.5" fill="#fff" filter="url(#ins)"/><text x="770.5" y="656.1" font-size="12.1" fill="#3d3d3d" text-anchor="middle"></text><path d="M497,674.6 L499.6,672 L510,672 L513,675 L521,675 L524,672 L668,672 L670.6,674.6 L670.6,694.9 L668,697.5 L524,697.5 L521,700.5 L513,700.5 L510,697.5 L499.6,697.5 L497,694.9 Z" fill="#FF6680" filter="url(#bev)"/><text x="504.2" y="689.8" font-size="12.6" fill="#fff" textLength="50.7" lengthAdjust="spacing">表情面板</text><rect x="559.4" y="676.55" width="48.4" height="16.5" rx="8.25" fill="#fff" filter="url(#ins)"/><text x="564" y="689.6" font-size="12.1" fill="#3d3d3d">接口C</text><path d="M598.45,680.9 L604.75,680.9 L601.6,684.7 Z" fill="#555"/><text x="612.5" y="689.8" font-size="12.6" fill="#fff">清空屏幕</text><path d="M497,718.6 L499.6,716 L510,716 L513,719 L521,719 L524,716 L837.4,716 L840,718.6 L840,738.9 L837.4,741.5 L524,741.5 L521,744.5 L513,744.5 L510,741.5 L499.6,741.5 L497,738.9 Z" fill="#FF6680" filter="url(#bev)"/><text x="504.2" y="733.8" font-size="12.6" fill="#fff" textLength="76.6" lengthAdjust="spacing">超声波传感器</text><rect x="585.3" y="720.55" width="47.3" height="16.5" rx="8.25" fill="#fff" filter="url(#ins)"/><text x="589.9" y="733.6" font-size="12.1" fill="#3d3d3d">接口B</text><path d="M623.25,724.9 L629.55,724.9 L626.4,728.7 Z" fill="#555"/><text x="637.3" y="733.8" font-size="12.6" fill="#fff" textLength="37.3" lengthAdjust="spacing">RGB灯</text><rect x="679.1" y="721.05" width="42.9" height="16.5" fill="#fff" filter="url(#ins)"/><text x="683.1" y="734.1" font-size="12.1" fill="#3d3d3d">全部</text><path d="M712.25,726 L718.55,726 L715.4,729.8 Z" fill="#555"/><text x="727" y="733.8" font-size="12.6" fill="#fff" textLength="11.7" lengthAdjust="spacing">红</text><rect x="743.2" y="720.55" width="23.4" height="16.5" rx="8.25" fill="#fff" filter="url(#ins)"/><text x="747.8" y="733.6" font-size="13.55" fill="#3d3d3d">0</text><path d="M757.25,724.9 L763.55,724.9 L760.4,728.7 Z" fill="#555"/><text x="771.6" y="733.8" font-size="12.6" fill="#fff" textLength="12.3" lengthAdjust="spacing">绿</text><rect x="788.4" y="720.55" width="23.6" height="16.5" rx="8.25" fill="#fff" filter="url(#ins)"/><text x="793" y="733.6" font-size="13.55" fill="#3d3d3d">0</text><path d="M802.65,724.9 L808.95,724.9 L805.8,728.7 Z" fill="#555"/><text x="815.8" y="733.8" font-size="12.6" fill="#fff">蓝</text><path d="M497,752.6 L499.6,750 L510,750 L513,753 L521,753 L524,750 L745.1,750 L747.7,752.6 L747.7,772.9 L745.1,775.5 L524,775.5 L521,778.5 L513,778.5 L510,775.5 L499.6,775.5 L497,772.9 Z" fill="#FF6680" filter="url(#bev)"/><text x="504.2" y="767.8" font-size="12.6" fill="#fff" textLength="76.6" lengthAdjust="spacing">超声波传感器</text><rect x="585.3" y="754.55" width="47.3" height="16.5" rx="8.25" fill="#fff" filter="url(#ins)"/><text x="589.9" y="767.6" font-size="12.1" fill="#3d3d3d">接口B</text><path d="M623.25,758.9 L629.55,758.9 L626.4,762.7 Z" fill="#555"/><text x="637.9" y="767.8" font-size="12.6" fill="#fff" textLength="24.6" lengthAdjust="spacing">黄灯</text><rect x="667" y="755.05" width="43" height="16.5" fill="#fff" filter="url(#ins)"/><text x="671" y="768.1" font-size="12.1" fill="#3d3d3d">全部</text><path d="M700.25,760 L706.55,760 L703.4,763.8 Z" fill="#555"/><rect x="712.2" y="755.05" width="30.7" height="16.5" fill="#fff" filter="url(#ins)"/><text x="716.2" y="768.1" font-size="12.1" fill="#3d3d3d">开</text><path d="M733.15,760 L739.45,760 L736.3,763.8 Z" fill="#555"/><path d="M497,786.6 L499.6,784 L510,784 L513,787 L521,787 L524,784 L837.4,784 L840,786.6 L840,806.9 L837.4,809.5 L524,809.5 L521,812.5 L513,812.5 L510,809.5 L499.6,809.5 L497,806.9 Z" fill="#FF6680" filter="url(#bev)"/><text x="504.2" y="801.8" font-size="12.6" fill="#fff" textLength="89.7" lengthAdjust="spacing">红外避障传感器</text><rect x="598.4" y="788.55" width="47.1" height="16.5" rx="8.25" fill="#fff" filter="url(#ins)"/><text x="603" y="801.6" font-size="12.1" fill="#3d3d3d">接口B</text><path d="M636.15,792.9 L642.45,792.9 L639.3,796.7 Z" fill="#555"/><text x="650.3" y="801.8" font-size="12.6" fill="#fff" textLength="37.4" lengthAdjust="spacing">RGB灯</text><rect x="692.2" y="789.05" width="43.1" height="16.5" fill="#fff" filter="url(#ins)"/><text x="696.2" y="802.1" font-size="12.1" fill="#3d3d3d">全部</text><path d="M725.55,794 L731.85,794 L728.7,797.8 Z" fill="#555"/><text x="739.7" y="801.8" font-size="12.6" fill="#fff" textLength="12.3" lengthAdjust="spacing">红</text><rect x="756.5" y="788.55" width="23" height="16.5" rx="8.25" fill="#fff" filter="url(#ins)"/><text x="761.1" y="801.6" font-size="13.55" fill="#3d3d3d">0</text><path d="M770.15,792.9 L776.45,792.9 L773.3,796.7 Z" fill="#555"/><text x="784.8" y="801.8" font-size="12.6" fill="#fff" textLength="12" lengthAdjust="spacing">绿</text><rect x="801.3" y="788.55" width="23.3" height="16.5" rx="8.25" fill="#fff" filter="url(#ins)"/><text x="805.9" y="801.6" font-size="13.55" fill="#3d3d3d">0</text><path d="M815.25,792.9 L821.55,792.9 L818.4,796.7 Z" fill="#555"/><path d="M497,820.6 L499.6,818 L510,818 L513,821 L521,821 L524,818 L758,818 L760.6,820.6 L760.6,840.9 L758,843.5 L524,843.5 L521,846.5 L513,846.5 L510,843.5 L499.6,843.5 L497,840.9 Z" fill="#FF6680" filter="url(#bev)"/><text x="504.2" y="835.8" font-size="12.6" fill="#fff" textLength="89.7" lengthAdjust="spacing">红外避障传感器</text><rect x="598.4" y="822.55" width="47.1" height="16.5" rx="8.25" fill="#fff" filter="url(#ins)"/><text x="603" y="835.6" font-size="12.1" fill="#3d3d3d">接口B</text><path d="M636.15,826.9 L642.45,826.9 L639.3,830.7 Z" fill="#555"/><text x="650.8" y="835.8" font-size="12.6" fill="#fff" textLength="25.1" lengthAdjust="spacing">黄灯</text><rect x="680.4" y="823.05" width="42.5" height="16.5" fill="#fff" filter="url(#ins)"/><text x="684.4" y="836.1" font-size="12.1" fill="#3d3d3d">全部</text><path d="M713.15,828 L719.45,828 L716.3,831.8 Z" fill="#555"/><rect x="725.2" y="823.05" width="30.4" height="16.5" fill="#fff" filter="url(#ins)"/><text x="729.2" y="836.1" font-size="12.1" fill="#3d3d3d">开</text><path d="M745.85,828 L752.15,828 L749,831.8 Z" fill="#555"/><path d="M497,854.6 L499.6,852 L510,852 L513,855 L521,855 L524,852 L640,852 L642.6,854.6 L642.6,874.9 L640,877.5 L524,877.5 L521,880.5 L513,880.5 L510,877.5 L499.6,877.5 L497,874.9 Z" fill="#FF6680" filter="url(#bev)"/><text x="504.2" y="869.8" font-size="12.6" fill="#fff" textLength="48.6" lengthAdjust="spacing">单色LED</text><rect x="557.3" y="856.55" width="47.45" height="16.5" rx="8.25" fill="#fff" filter="url(#ins)"/><text x="561.9" y="869.6" font-size="12.1" fill="#3d3d3d">接口A</text><path d="M595.4,860.9 L601.7,860.9 L598.55,864.7 Z" fill="#555"/><rect x="607.2" y="857.05" width="30.7" height="16.5" fill="#fff" filter="url(#ins)"/><text x="611.2" y="870.1" font-size="12.1" fill="#3d3d3d">开</text><path d="M628.15,862 L634.45,862 L631.3,865.8 Z" fill="#555"/><path d="M497,888.6 L499.6,886 L510,886 L513,889 L521,889 L524,886 L689.3,886 L691.9,888.6 L691.9,908.9 L689.3,911.5 L524,911.5 L521,914.5 L513,914.5 L510,911.5 L499.6,911.5 L497,908.9 Z" fill="#FF6680" filter="url(#bev)"/><text x="504.2" y="903.8" font-size="12.6" fill="#fff" textLength="63.6" lengthAdjust="spacing">四位数码管</text><rect x="572.3" y="890.55" width="47.5" height="16.5" rx="8.25" fill="#fff" filter="url(#ins)"/><text x="576.9" y="903.6" font-size="12.1" fill="#3d3d3d">接口A</text><path d="M610.45,894.9 L616.75,894.9 L613.6,898.7 Z" fill="#555"/><text x="625" y="903.8" font-size="12.6" fill="#fff" textLength="24.8" lengthAdjust="spacing">显示</text><rect x="654.3" y="890.55" width="32.6" height="16.5" rx="8.25" fill="#fff" filter="url(#ins)"/><text x="670.6" y="903.6" font-size="13.55" fill="#3d3d3d" text-anchor="middle">100</text><path d="M497,922.6 L499.6,920 L510,920 L513,923 L521,923 L524,920 L706.1,920 L708.7,922.6 L708.7,942.9 L706.1,945.5 L524,945.5 L521,948.5 L513,948.5 L510,945.5 L499.6,945.5 L497,942.9 Z" fill="#FF6680" filter="url(#bev)"/><text x="504.2" y="937.8" font-size="12.6" fill="#fff" textLength="65.4" lengthAdjust="spacing">板载RGB灯</text><text x="574.1" y="937.8" font-size="12.6" fill="#fff" textLength="11.4" lengthAdjust="spacing">红</text><rect x="590" y="924.55" width="23.6" height="16.5" rx="8.25" fill="#fff" filter="url(#ins)"/><text x="594.6" y="937.6" font-size="13.55" fill="#3d3d3d">0</text><path d="M604.25,928.9 L610.55,928.9 L607.4,932.7 Z" fill="#555"/><text x="618.9" y="937.8" font-size="12.6" fill="#fff" textLength="11.8" lengthAdjust="spacing">绿</text><rect x="635.2" y="924.55" width="23.4" height="16.5" rx="8.25" fill="#fff" filter="url(#ins)"/><text x="639.8" y="937.6" font-size="13.55" fill="#3d3d3d">0</text><path d="M649.25,928.9 L655.55,928.9 L652.4,932.7 Z" fill="#555"/><text x="663.9" y="937.8" font-size="12.6" fill="#fff" textLength="12" lengthAdjust="spacing">蓝</text><rect x="680.4" y="924.55" width="23.5" height="16.5" rx="8.25" fill="#fff" filter="url(#ins)"/><text x="685" y="937.6" font-size="13.55" fill="#3d3d3d">0</text><path d="M694.55,928.9 L700.85,928.9 L697.7,932.7 Z" fill="#555"/><path d="M497,956.6 L499.6,954 L510,954 L513,957 L521,957 L524,954 L771.6,954 L774.2,956.6 L774.2,976.9 L771.6,979.5 L524,979.5 L521,982.5 L513,982.5 L510,979.5 L499.6,979.5 L497,976.9 Z" fill="#FF6680" filter="url(#bev)"/><text x="504.2" y="971.8" font-size="12.6" fill="#fff" textLength="36.55" lengthAdjust="spacing">RGB灯</text><rect x="545.25" y="958.55" width="47.45" height="16.5" rx="8.25" fill="#fff" filter="url(#ins)"/><text x="549.85" y="971.6" font-size="12.1" fill="#3d3d3d">接口A</text><path d="M583.35,962.9 L589.65,962.9 L586.5,966.7 Z" fill="#555"/><rect x="595.4" y="958.55" width="39.5" height="16.5" rx="8.25" fill="#fff" filter="url(#ins)"/><text x="600" y="971.6" font-size="12.1" fill="#3d3d3d">全部</text><path d="M625.55,962.9 L631.85,962.9 L628.7,966.7 Z" fill="#555"/><text x="639.6" y="971.8" font-size="12.6" fill="#fff" textLength="12" lengthAdjust="spacing">红</text><rect x="656.1" y="958.55" width="23.7" height="16.5" rx="8.25" fill="#fff" filter="url(#ins)"/><text x="660.7" y="971.6" font-size="13.55" fill="#3d3d3d">0</text><path d="M670.45,962.9 L676.75,962.9 L673.6,966.7 Z" fill="#555"/><text x="684.8" y="971.8" font-size="12.6" fill="#fff" textLength="11.8" lengthAdjust="spacing">绿</text><rect x="701.1" y="958.55" width="23.5" height="16.5" rx="8.25" fill="#fff" filter="url(#ins)"/><text x="705.7" y="971.6" font-size="13.55" fill="#3d3d3d">0</text><path d="M715.25,962.9 L721.55,962.9 L718.4,966.7 Z" fill="#555"/><text x="730" y="971.8" font-size="12.6" fill="#fff" textLength="11.9" lengthAdjust="spacing">蓝</text><rect x="746.4" y="958.55" width="23.4" height="16.5" rx="8.25" fill="#fff" filter="url(#ins)"/><text x="751" y="971.6" font-size="13.55" fill="#3d3d3d">0</text><path d="M760.45,962.9 L766.75,962.9 L763.6,966.7 Z" fill="#555"/><path d="M497,990.6 L499.6,988 L510,988 L513,991 L521,991 L524,988 L837.4,988 L840,990.6 L840,1010.9 L837.4,1013.5 L524,1013.5 L521,1016.5 L513,1016.5 L510,1013.5 L499.6,1013.5 L497,1010.9 Z" fill="#FF6680" filter="url(#bev)"/><text x="504.2" y="1005.8" font-size="12.6" fill="#fff" textLength="50.7" lengthAdjust="spacing">设置灯带</text><rect x="559.4" y="992.55" width="47.5" height="16.5" rx="8.25" fill="#fff" filter="url(#ins)"/><text x="564" y="1005.6" font-size="12.1" fill="#3d3d3d">接口A</text><path d="M597.55,996.9 L603.85,996.9 L600.7,1000.7 Z" fill="#555"/><rect x="609.5" y="992.55" width="39" height="16.5" rx="8.25" fill="#fff" filter="url(#ins)"/><text x="614.1" y="1005.6" font-size="12.1" fill="#3d3d3d">全部</text><path d="M639.15,996.9 L645.45,996.9 L642.3,1000.7 Z" fill="#555"/><text x="653.8" y="1005.8" font-size="12.6" fill="#fff" textLength="25.1" lengthAdjust="spacing">红色</text><rect x="683.4" y="992.55" width="23" height="16.5" rx="8.25" fill="#fff" filter="url(#ins)"/><text x="688" y="1005.6" font-size="13.55" fill="#3d3d3d">0</text><path d="M697.05,996.9 L703.35,996.9 L700.2,1000.7 Z" fill="#555"/><text x="711.4" y="1005.8" font-size="12.6" fill="#fff" textLength="25.2" lengthAdjust="spacing">绿色</text><rect x="741.1" y="992.55" width="23.4" height="16.5" rx="8.25" fill="#fff" filter="url(#ins)"/><text x="745.7" y="1005.6" font-size="13.55" fill="#3d3d3d">0</text><path d="M755.15,996.9 L761.45,996.9 L758.3,1000.7 Z" fill="#555"/><text x="769.4" y="1005.8" font-size="12.6" fill="#fff" textLength="25.1" lengthAdjust="spacing">蓝色</text><rect x="799" y="992.55" width="23.4" height="16.5" rx="8.25" fill="#fff" filter="url(#ins)"/><text x="803.6" y="1005.6" font-size="13.55" fill="#3d3d3d">0</text><path d="M813.05,996.9 L819.35,996.9 L816.2,1000.7 Z" fill="#555"/><path d="M497,1024.6 L499.6,1022 L510,1022 L513,1025 L521,1025 L524,1022 L707.9,1022 L710.5,1024.6 L710.5,1044.9 L707.9,1047.5 L524,1047.5 L521,1050.5 L513,1050.5 L510,1047.5 L499.6,1047.5 L497,1044.9 Z" fill="#FF6680" filter="url(#bev)"/><text x="504.2" y="1039.8" font-size="12.6" fill="#fff" textLength="87.3" lengthAdjust="spacing">LED按键传感器</text><rect x="596" y="1026.55" width="47" height="16.5" rx="8.25" fill="#fff" filter="url(#ins)"/><text x="600.6" y="1039.6" font-size="12.1" fill="#3d3d3d">接口A</text><path d="M633.65,1030.9 L639.95,1030.9 L636.8,1034.7 Z" fill="#555"/><rect x="646.7" y="1027.05" width="25.7" height="16.5" fill="#fff" filter="url(#ins)"/><text x="650.7" y="1040.1" font-size="12.1" fill="#3d3d3d">A</text><path d="M662.65,1032 L668.95,1032 L665.8,1035.8 Z" fill="#555"/><rect x="675" y="1027.05" width="31" height="16.5" fill="#fff" filter="url(#ins)"/><text x="679" y="1040.1" font-size="12.1" fill="#3d3d3d">开</text><path d="M696.25,1032 L702.55,1032 L699.4,1035.8 Z" fill="#555"/></g>
</svg>
<div class="a" style="left:749px;top:202px;width:9px;height:827px;border-radius:4.5px;background:rgba(140,142,143,0.22)"></div>
<div class="a" style="left:749px;top:202px;width:9px;height:305px;border-radius:4.5px;background:rgba(120,122,123,0.38)"></div>
<div class="a" style="left:0;top:1040px;width:1920px;height:8px;background:#303030"></div>
<div class="a" style="left:200px;top:1040px;width:24px;height:8px;background:#3f7a3f"></div>
<div class="a" style="left:224px;top:1040px;width:16px;height:8px;background:#474747"></div>
<div class="a" style="left:343px;top:1040px;width:48px;height:8px;background:#5a5a5a"></div>
<div class="a" style="left:1915px;top:1040px;width:1px;height:8px;background:#777"></div>
<div class="t" style="left:1814px;top:1045px;font-size:12px;color:#fff">10:04</div>
</body></html>
